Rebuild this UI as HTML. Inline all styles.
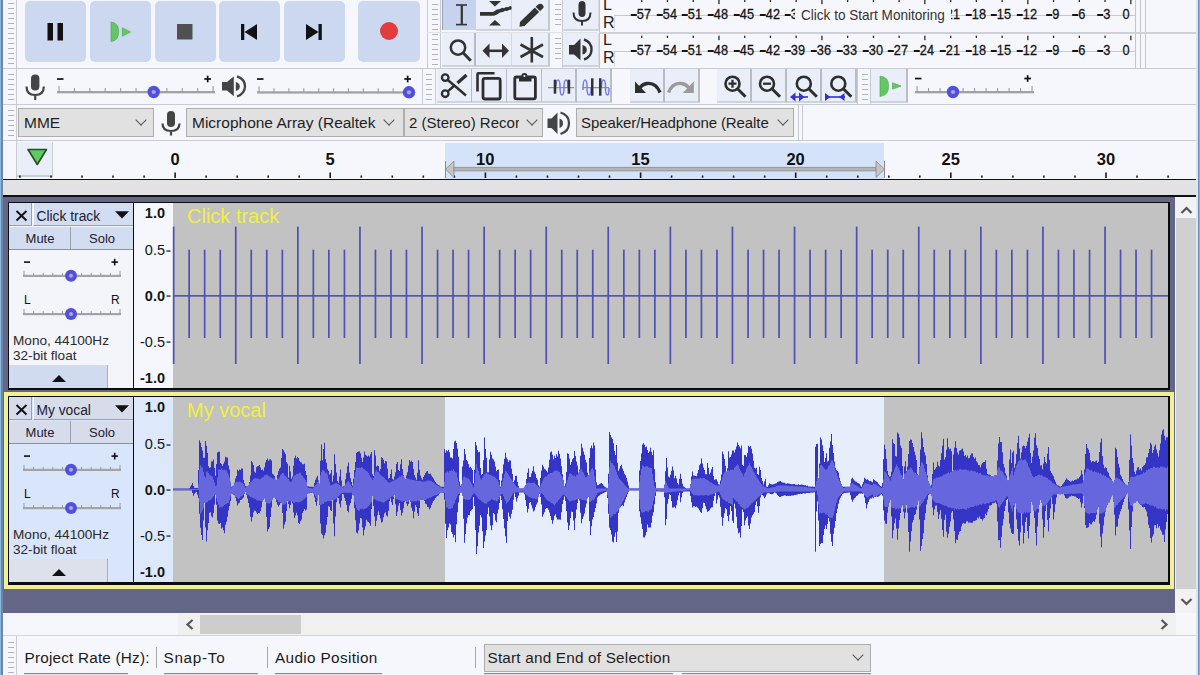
<!DOCTYPE html>
<html><head><meta charset="utf-8">
<style>
*{margin:0;padding:0;box-sizing:border-box}
html,body{width:1200px;height:675px;overflow:hidden;background:#f6f7fc;font-family:"Liberation Sans",sans-serif;color:#222}
.a{position:absolute}
.grip{position:absolute;width:6px;background:repeating-linear-gradient(to bottom,#b4b4b4 0,#b4b4b4 1px,transparent 1px,transparent 5px)}
.vl{position:absolute;width:1px;background:#c9cbd3}
.hl{position:absolute;height:1px;background:#c9cbd3}
.tb{position:absolute;background:#ccd8f0;border-radius:5px}
.tool{position:absolute;background:#e9eef9;border-bottom:2px solid #cfd3dc;border-right:1px solid #d6d9e0}
.dd{position:absolute;background:#e1e1e1;border:1px solid #adadad;font-size:15.5px;color:#1e1e1e;line-height:27px;padding-left:4px;white-space:nowrap;overflow:hidden}
.chev{position:absolute;top:10px;width:8px;height:8px;border-right:1.3px solid #555;border-bottom:1.3px solid #555;transform:rotate(45deg)}
svg{position:absolute;overflow:visible}
.ml{position:absolute;width:40px;text-align:center;font-size:15px;line-height:14px;color:#141414;transform:scaleX(0.85);white-space:nowrap;-webkit-text-stroke:0.3px #141414}
.mn{display:inline-block;width:6.8px;height:1.9px;background:#141414;vertical-align:3.2px}

</style></head><body>
<!-- window borders -->
<div class="a" style="left:0;top:0;width:2px;height:675px;background:#8cb6de"></div>
<div class="a" style="left:1px;top:0;width:2px;height:675px;background:#6a86a8"></div>


<!-- ROW 1 -->
<div class="grip" style="left:8px;top:3px;height:62px"></div>
<div class="vl" style="left:16px;top:0;height:68px"></div>
<div class="tb" style="left:25px;top:1px;width:61px;height:61px"></div>
<div class="tb" style="left:90px;top:1px;width:61px;height:61px"></div>
<div class="tb" style="left:155px;top:1px;width:61px;height:61px"></div>
<div class="tb" style="left:219px;top:1px;width:61px;height:61px"></div>
<div class="tb" style="left:284px;top:1px;width:61px;height:61px"></div>
<div class="tb" style="left:358px;top:1px;width:62px;height:61px"></div>
<div class="hl" style="left:3px;top:68px;width:1194px"></div>
<svg style="left:0;top:0" width="1200" height="70">
<rect x="47.5" y="23" width="5.5" height="17.5" fill="#111"/>
<rect x="57.5" y="23" width="5.5" height="17.5" fill="#111"/>
<path d="M111 22 Q119 23 118.5 31.5 Q119 40.5 111 41.5 Z" fill="#62c862" stroke="#4fa04f" stroke-width="0.6"/>
<path d="M122.3 27.7 L130.5 32 L122.3 36.3 Z" fill="#62c862" stroke="#4fa04f" stroke-width="0.6"/>
<rect x="177" y="24" width="15.5" height="15.5" fill="#505050"/>
<rect x="241" y="24" width="3.3" height="16" fill="#111"/>
<path d="M257 24 L244.5 32 L257 40 Z" fill="#111"/>
<rect x="318.5" y="24" width="3.3" height="16" fill="#111"/>
<path d="M306 24 L318.5 32 L306 40 Z" fill="#111"/>
<circle cx="389" cy="31" r="9" fill="#e23c3c"/>
</svg>


<!-- tools toolbar -->
<div class="vl" style="left:427px;top:0;height:68px"></div>
<div class="grip" style="left:432px;top:4px;height:62px"></div>
<div class="vl" style="left:440px;top:0;height:68px"></div>
<div class="a" style="left:442px;top:0;width:34px;height:30px;background:#c7d3ee;border-left:1px solid #9aa4b8"></div>
<div class="tool" style="left:476px;top:0;width:36px;height:31px"></div>
<div class="tool" style="left:512px;top:0;width:38px;height:31px;border-right:2px solid #c4c8d0"></div>
<div class="tool" style="left:442px;top:33px;width:34px;height:34px;border-right:2px solid #b8bcc6"></div>
<div class="tool" style="left:476px;top:33px;width:36px;height:34px"></div>
<div class="tool" style="left:512px;top:33px;width:38px;height:34px;border-right:2px solid #c4c8d0"></div>
<div class="grip" style="left:555px;top:4px;height:25px"></div>
<div class="grip" style="left:555px;top:38px;height:25px"></div>
<div class="vl" style="left:562px;top:0;height:68px"></div>
<div class="tool" style="left:563px;top:0;width:36px;height:31px"></div>
<div class="tool" style="left:563px;top:33px;width:36px;height:34px"></div>
<div class="hl" style="left:427px;top:32px;width:170px;background:#e0e2e8"></div>
<svg style="left:0;top:0" width="1200" height="70">
<g fill="#333" stroke="none">
<rect x="456" y="4.2" width="11" height="1.6"/>
<rect x="460.7" y="5" width="2.2" height="19.5"/>
<rect x="456" y="23.8" width="11" height="1.6"/>
<path d="M489 1 L501 1 L495 6.5 Z"/>
<path d="M489 25.5 L501 25.5 L495 20 Z"/>
<path d="M480 12 L493 12 L497 9.5 L500 9 L502 7.8 L504 8.2 L506 7 L508 7.2 L510 6 L511.5 6.5 L511.5 9.5 L509 10 L507 11 L505 10.8 L503 12 L500 12.5 L497 14.5 L494 15.8 L480 15.8 Z"/>
<path d="M520 22 L538 4.5 Q540.5 2.8 542.5 4.5 Q544.5 6.5 542.8 8.5 L524.5 26 L519.5 26.8 Z"/><path d="M535.2 7.2 L540.2 12.2" stroke="#e9eef9" stroke-width="1.2"/>
<path d="M578.5 5 Q578.5 1 582 1 Q585.5 1 585.5 5 L585.5 13 Q585.5 17 582 17 Q578.5 17 578.5 13 Z"/>
</g>
<g fill="none" stroke="#333" stroke-width="2">
<path d="M573.5 12.5 Q573.5 21 582 21 Q590.5 21 590.5 12.5"/>
<path d="M582 21 L582 25.5"/>
<circle cx="458" cy="47.6" r="7.2" stroke-width="2.5"/>
<path d="M463.3 53 L470.8 60.8" stroke-width="3"/>
<path d="M487 50.8 L505 50.8" stroke-width="2.6"/>
<path d="M531.8 37 L531.8 62.5 M520.5 44.5 L543 57 M520.5 57 L543 44.5" stroke-width="2.6"/>
<path d="M584 39.5 Q591.5 42 591.5 49.5 Q591.5 57 584 59.5" stroke-width="2.4"/>
</g>
<g fill="#333">
<path d="M482.5 50.8 L489.5 43.6 L489.5 58 Z"/>
<path d="M509 50.8 L502 43.6 L502 58 Z"/>
<path d="M569 45 L574 45 L580.5 38.5 L580.5 60.3 L574 54.5 L569 54.5 Z"/><path d="M582.5 45 Q586.8 46 586.8 49.7 Q586.8 53.5 582.5 54.5 Z"/>
</g>
<path d="M583 43.5 L583 55" stroke="#333" stroke-width="0"/>
</svg>
<!-- meters -->
<div class="vl" style="left:599px;top:0;height:68px;background:#c4c6cc"></div>
<div class="a" style="left:603px;top:-1.8px;font-size:16px;line-height:14px;color:#222">L</div>
<div class="a" style="left:603px;top:16.2px;font-size:16px;line-height:14px;color:#222">R</div>
<div class="vl" style="left:614px;top:15px;height:16px;background:#d4d6dc"></div>
<div class="hl" style="left:614px;top:15px;width:521px;background:#c8cad0"></div>
<div class="a" style="left:603px;top:33px;font-size:16px;line-height:14px;color:#222">L</div>
<div class="a" style="left:603px;top:51.2px;font-size:16px;line-height:14px;color:#222">R</div>
<div class="vl" style="left:614px;top:51px;height:16px;background:#d4d6dc"></div>
<div class="hl" style="left:614px;top:51px;width:521px;background:#c8cad0"></div>
<svg style="left:0;top:0" width="1200" height="70"><g fill="#2a2a2a"><rect x="641.1" y="-0.3" width="1.3" height="2.3"/><rect x="666.8" y="-0.3" width="1.3" height="2.3"/><rect x="692.6" y="-0.3" width="1.3" height="2.3"/><rect x="718.3" y="-0.3" width="1.3" height="4.5"/><rect x="744.1" y="-0.3" width="1.3" height="2.3"/><rect x="769.8" y="-0.3" width="1.3" height="2.3"/><rect x="795.5" y="-0.3" width="1.3" height="2.3"/><rect x="821.3" y="-0.3" width="1.3" height="4.5"/><rect x="847.0" y="-0.3" width="1.3" height="2.3"/><rect x="872.8" y="-0.3" width="1.3" height="2.3"/><rect x="898.5" y="-0.3" width="1.3" height="2.3"/><rect x="924.2" y="-0.3" width="1.3" height="4.5"/><rect x="950.0" y="-0.3" width="1.3" height="2.3"/><rect x="975.7" y="-0.3" width="1.3" height="2.3"/><rect x="1001.5" y="-0.3" width="1.3" height="2.3"/><rect x="1027.2" y="-0.3" width="1.3" height="4.5"/><rect x="1052.9" y="-0.3" width="1.3" height="2.3"/><rect x="1078.7" y="-0.3" width="1.3" height="2.3"/><rect x="1104.4" y="-0.3" width="1.3" height="2.3"/><rect x="1130.2" y="-0.3" width="1.3" height="4.5"/><rect x="641.1" y="35.7" width="1.3" height="2.3"/><rect x="666.8" y="35.7" width="1.3" height="2.3"/><rect x="692.6" y="35.7" width="1.3" height="2.3"/><rect x="718.3" y="35.7" width="1.3" height="4.5"/><rect x="744.1" y="35.7" width="1.3" height="2.3"/><rect x="769.8" y="35.7" width="1.3" height="2.3"/><rect x="795.5" y="35.7" width="1.3" height="2.3"/><rect x="821.3" y="35.7" width="1.3" height="4.5"/><rect x="847.0" y="35.7" width="1.3" height="2.3"/><rect x="872.8" y="35.7" width="1.3" height="2.3"/><rect x="898.5" y="35.7" width="1.3" height="2.3"/><rect x="924.2" y="35.7" width="1.3" height="4.5"/><rect x="950.0" y="35.7" width="1.3" height="2.3"/><rect x="975.7" y="35.7" width="1.3" height="2.3"/><rect x="1001.5" y="35.7" width="1.3" height="2.3"/><rect x="1027.2" y="35.7" width="1.3" height="4.5"/><rect x="1052.9" y="35.7" width="1.3" height="2.3"/><rect x="1078.7" y="35.7" width="1.3" height="2.3"/><rect x="1104.4" y="35.7" width="1.3" height="2.3"/><rect x="1130.2" y="35.7" width="1.3" height="4.5"/></g></svg>
<div class="ml" style="left:620.9px;top:7px"><i class="mn"></i>57</div>
<div class="ml" style="left:646.6px;top:7px"><i class="mn"></i>54</div>
<div class="ml" style="left:672.4px;top:7px"><i class="mn"></i>51</div>
<div class="ml" style="left:698.1px;top:7px"><i class="mn"></i>48</div>
<div class="ml" style="left:723.9px;top:7px"><i class="mn"></i>45</div>
<div class="ml" style="left:749.6px;top:7px"><i class="mn"></i>42</div>
<div class="ml" style="left:775.3px;top:7px"><i class="mn"></i>39</div>
<div class="ml" style="left:801.1px;top:7px"><i class="mn"></i>36</div>
<div class="ml" style="left:826.8px;top:7px"><i class="mn"></i>33</div>
<div class="ml" style="left:852.6px;top:7px"><i class="mn"></i>30</div>
<div class="ml" style="left:878.3px;top:7px"><i class="mn"></i>27</div>
<div class="ml" style="left:904.0px;top:7px"><i class="mn"></i>24</div>
<div class="ml" style="left:929.8px;top:7px"><i class="mn"></i>21</div>
<div class="ml" style="left:955.5px;top:7px"><i class="mn"></i>18</div>
<div class="ml" style="left:981.3px;top:7px"><i class="mn"></i>15</div>
<div class="ml" style="left:1007.0px;top:7px"><i class="mn"></i>12</div>
<div class="ml" style="left:1032.7px;top:7px"><i class="mn"></i>9</div>
<div class="ml" style="left:1058.5px;top:7px"><i class="mn"></i>6</div>
<div class="ml" style="left:1084.2px;top:7px"><i class="mn"></i>3</div>
<div class="ml" style="left:1106.2px;top:7px">0</div>
<div class="ml" style="left:620.9px;top:43px"><i class="mn"></i>57</div>
<div class="ml" style="left:646.6px;top:43px"><i class="mn"></i>54</div>
<div class="ml" style="left:672.4px;top:43px"><i class="mn"></i>51</div>
<div class="ml" style="left:698.1px;top:43px"><i class="mn"></i>48</div>
<div class="ml" style="left:723.9px;top:43px"><i class="mn"></i>45</div>
<div class="ml" style="left:749.6px;top:43px"><i class="mn"></i>42</div>
<div class="ml" style="left:775.3px;top:43px"><i class="mn"></i>39</div>
<div class="ml" style="left:801.1px;top:43px"><i class="mn"></i>36</div>
<div class="ml" style="left:826.8px;top:43px"><i class="mn"></i>33</div>
<div class="ml" style="left:852.6px;top:43px"><i class="mn"></i>30</div>
<div class="ml" style="left:878.3px;top:43px"><i class="mn"></i>27</div>
<div class="ml" style="left:904.0px;top:43px"><i class="mn"></i>24</div>
<div class="ml" style="left:929.8px;top:43px"><i class="mn"></i>21</div>
<div class="ml" style="left:955.5px;top:43px"><i class="mn"></i>18</div>
<div class="ml" style="left:981.3px;top:43px"><i class="mn"></i>15</div>
<div class="ml" style="left:1007.0px;top:43px"><i class="mn"></i>12</div>
<div class="ml" style="left:1032.7px;top:43px"><i class="mn"></i>9</div>
<div class="ml" style="left:1058.5px;top:43px"><i class="mn"></i>6</div>
<div class="ml" style="left:1084.2px;top:43px"><i class="mn"></i>3</div>
<div class="ml" style="left:1106.2px;top:43px">0</div>

<div class="a" style="left:795px;top:5px;width:156px;height:20px;background:#f6f7fc"></div>
<div class="a" style="left:801px;top:7px;font-size:14.5px;line-height:16px;color:#333;transform:scaleX(0.935);transform-origin:0 0;white-space:nowrap">Click to Start Monitoring</div>
<div class="vl" style="left:1135px;top:0;height:68px;background:#c4c6cc"></div>
<div class="vl" style="left:1140px;top:0;height:68px;background:#c4c6cc"></div>
<div class="vl" style="left:1145px;top:0;height:68px;background:#c4c6cc"></div>
<div class="hl" style="left:599px;top:32px;width:598px;height:2px;background:#cfd1d6"></div>

<!-- ROW 2 -->
<div class="grip" style="left:8px;top:74px;height:27px"></div>
<div class="vl" style="left:16px;top:68px;height:36px"></div>
<div class="vl" style="left:422px;top:68px;height:36px"></div>
<div class="grip" style="left:426px;top:74px;height:27px"></div>
<div class="vl" style="left:435px;top:68px;height:36px"></div>
<div class="hl" style="left:3px;top:104px;width:1194px"></div>
<svg style="left:0;top:0" width="1200" height="140"><rect x="57" y="91" width="158" height="2.3" fill="#a2a2a2"/><rect x="58.5" y="86.0" width="1.1" height="6" fill="#9c9c9c"/><rect x="73.9" y="88.0" width="1.1" height="4" fill="#9c9c9c"/><rect x="89.3" y="88.0" width="1.1" height="4" fill="#9c9c9c"/><rect x="104.7" y="88.0" width="1.1" height="4" fill="#9c9c9c"/><rect x="120.1" y="88.0" width="1.1" height="4" fill="#9c9c9c"/><rect x="135.5" y="88.0" width="1.1" height="4" fill="#9c9c9c"/><rect x="150.9" y="88.0" width="1.1" height="4" fill="#9c9c9c"/><rect x="166.3" y="88.0" width="1.1" height="4" fill="#9c9c9c"/><rect x="181.7" y="88.0" width="1.1" height="4" fill="#9c9c9c"/><rect x="197.1" y="88.0" width="1.1" height="4" fill="#9c9c9c"/><rect x="212.5" y="86.0" width="1.1" height="6" fill="#9c9c9c"/><circle cx="153.7" cy="92" r="6.2" fill="#5050dc"/><circle cx="153.7" cy="92" r="2.1" fill="#a4a8d0"/><rect x="57" y="78.2" width="6.5" height="1.7" fill="#111"/><rect x="204.3" y="78.15" width="6.7" height="1.7" fill="#111"/><rect x="206.8" y="75.7" width="1.7" height="6.6" fill="#111"/><rect x="257" y="91.3" width="153" height="2.3" fill="#a2a2a2"/><rect x="258.5" y="86.3" width="1.1" height="6" fill="#9c9c9c"/><rect x="273.4" y="88.3" width="1.1" height="4" fill="#9c9c9c"/><rect x="288.3" y="88.3" width="1.1" height="4" fill="#9c9c9c"/><rect x="303.2" y="88.3" width="1.1" height="4" fill="#9c9c9c"/><rect x="318.1" y="88.3" width="1.1" height="4" fill="#9c9c9c"/><rect x="333.0" y="88.3" width="1.1" height="4" fill="#9c9c9c"/><rect x="347.9" y="88.3" width="1.1" height="4" fill="#9c9c9c"/><rect x="362.8" y="88.3" width="1.1" height="4" fill="#9c9c9c"/><rect x="377.7" y="88.3" width="1.1" height="4" fill="#9c9c9c"/><rect x="392.6" y="88.3" width="1.1" height="4" fill="#9c9c9c"/><rect x="407.5" y="86.3" width="1.1" height="6" fill="#9c9c9c"/><circle cx="409" cy="92.3" r="6.2" fill="#5050dc"/><circle cx="409" cy="92.3" r="2.1" fill="#a4a8d0"/><rect x="257" y="78.2" width="6.5" height="1.7" fill="#111"/><rect x="404.3" y="78.15" width="6.7" height="1.7" fill="#111"/><rect x="406.8" y="75.7" width="1.7" height="6.6" fill="#111"/><rect x="915" y="91" width="119" height="2.3" fill="#a2a2a2"/><rect x="916.5" y="86.0" width="1.1" height="6" fill="#9c9c9c"/><rect x="928.0" y="88.0" width="1.1" height="4" fill="#9c9c9c"/><rect x="939.5" y="88.0" width="1.1" height="4" fill="#9c9c9c"/><rect x="951.0" y="88.0" width="1.1" height="4" fill="#9c9c9c"/><rect x="962.5" y="88.0" width="1.1" height="4" fill="#9c9c9c"/><rect x="974.0" y="88.0" width="1.1" height="4" fill="#9c9c9c"/><rect x="985.5" y="88.0" width="1.1" height="4" fill="#9c9c9c"/><rect x="997.0" y="88.0" width="1.1" height="4" fill="#9c9c9c"/><rect x="1008.5" y="88.0" width="1.1" height="4" fill="#9c9c9c"/><rect x="1020.0" y="88.0" width="1.1" height="4" fill="#9c9c9c"/><rect x="1031.5" y="86.0" width="1.1" height="6" fill="#9c9c9c"/><circle cx="953" cy="92" r="6.2" fill="#5050dc"/><circle cx="953" cy="92" r="2.1" fill="#a4a8d0"/><rect x="915" y="77.7" width="6.5" height="1.7" fill="#111"/><rect x="1024.3" y="77.65" width="6.7" height="1.7" fill="#111"/><rect x="1026.8" y="75.2" width="1.7" height="6.6" fill="#111"/><g fill="#444"><path d="M31 78.5 Q31 74.4 35.2 74.4 Q39.4 74.4 39.4 78.5 L39.4 86.5 Q39.4 90.6 35.2 90.6 Q31 90.6 31 86.5 Z"/></g><g fill="none" stroke="#444" stroke-width="2.2"><path d="M26.5 86.5 Q26.5 95 35.2 95 Q43.8 95 43.8 86.5"/><path d="M35.2 95 L35.2 100"/></g><g fill="#444"><path d="M222 82 L227 82 L233.8 76.5 L233.8 96.2 L227 90.5 L222 90.5 Z"/><path d="M235.8 82 Q239.8 83 239.8 86.5 Q239.8 90 235.8 91 Z"/></g><path d="M237 76.3 Q245 79 245 86.3 Q245 93.6 237 96.5" fill="none" stroke="#444" stroke-width="2.3"/></svg>

<!-- edit toolbar -->
<div class="tool" style="left:437px;top:69px;width:35px;height:34px;border-right:1px solid #b8bcc6"></div>
<div class="tool" style="left:472px;top:69px;width:35px;height:34px;border-right:1px solid #b8bcc6"></div>
<div class="tool" style="left:507px;top:69px;width:35px;height:34px;border-right:1px solid #b8bcc6"></div>
<div class="tool" style="left:542px;top:69px;width:35px;height:34px;border-right:2px solid #b8bcc6"></div>
<div class="tool" style="left:577px;top:69px;width:35px;height:34px;border-right:2px solid #b8bcc6"></div>
<div class="tool" style="left:630px;top:69px;width:35px;height:34px;border-right:2px solid #b8bcc6"></div>
<div class="tool" style="left:665px;top:69px;width:35px;height:34px;border-right:2px solid #b8bcc6"></div>
<div class="tool" style="left:717px;top:69px;width:35px;height:34px;border-right:2px solid #b8bcc6"></div>
<div class="tool" style="left:752px;top:69px;width:35px;height:34px;border-right:2px solid #b8bcc6"></div>
<div class="tool" style="left:787px;top:69px;width:35px;height:34px;border-right:2px solid #b8bcc6"></div>
<div class="tool" style="left:822px;top:69px;width:35px;height:34px;border-right:2px solid #b8bcc6"></div>
<div class="vl" style="left:857px;top:68px;height:36px"></div>
<div class="grip" style="left:862px;top:74px;height:27px"></div>
<div class="vl" style="left:870px;top:68px;height:36px"></div>
<div class="tool" style="left:871px;top:69px;width:37px;height:34px;border-right:2px solid #b8bcc6"></div>
<svg style="left:0;top:0" width="1200" height="140">
<g fill="none" stroke="#2e2e2e">
<circle cx="445.2" cy="77.6" r="3.3" stroke-width="2.3"/>
<circle cx="445.2" cy="93.7" r="3.3" stroke-width="2.3"/>
<path d="M447.8 80 L466 95.5" stroke-width="2.4"/>
<path d="M447.8 91.3 L455 85" stroke-width="2.4"/>
<path d="M457.5 83 L466.5 75" stroke-width="3.2"/>
<path d="M477.5 91.5 L477.5 74.2 Q477.5 73.2 478.5 73.2 L494.5 73.2" stroke-width="2.6"/>
<rect x="483" y="78.4" width="17.2" height="20.6" rx="2" stroke-width="2.8"/>
<rect x="514.8" y="77" width="20.6" height="21.8" rx="1.8" stroke-width="2.8"/>
</g>
<g fill="#2e2e2e">
<path d="M519 76.5 L531.5 76.5 L531.5 81.5 L519 81.5 Z"/>
<circle cx="524.4" cy="76" r="3"/>
</g>
<circle cx="524.4" cy="76" r="1.1" fill="#e9eef9"/>
<path d="M548 87.7 L574 87.7 M583 87.7 L609 87.7" stroke="#8890b0" stroke-width="1.2"/>
<path d="M556 86 Q556 80 558 80 Q560 80 560 87 Q560 95 562 95 Q564 95 564 87 Q564 80 566 80 Q568 80 568 87" fill="none" stroke="#7a7ae6" stroke-width="1.5"/>
<path d="M583 90 Q583 80 585 80 Q587 80 587 87 Q587 95 589 95 Q591 95 591 87 M601.5 87 Q601.5 80 603.5 80 Q605.5 80 605.5 87 Q605.5 95 607.5 95 Q609 95 609 88" fill="none" stroke="#7a7ae6" stroke-width="1.5"/>
<g fill="#333">
<rect x="553.7" y="79.7" width="2.6" height="14"/>
<rect x="567.6" y="79.7" width="2.6" height="14"/>
<rect x="591" y="78.3" width="2.5" height="17.4"/>
<rect x="599" y="78.3" width="2.5" height="17.4"/>
</g>
<path d="M660 92.5 Q656 82.5 647 83.5 Q642.5 84 639.5 88" fill="none" stroke="#2e2e2e" stroke-width="3.4"/>
<path d="M635 81.5 L635 93 L646 93 Z" fill="#2e2e2e"/>
<path d="M668.5 92.5 Q672.5 82.5 681.5 83.5 Q686 84 689 88" fill="none" stroke="#9a9a9a" stroke-width="3.4"/>
<path d="M693.8 81.5 L693.8 93 L682.8 93 Z" fill="#9a9a9a"/>
<g fill="none" stroke="#2e2e2e" stroke-width="2.6">
<circle cx="732.5" cy="83.7" r="7"/><path d="M737.5 88.8 L745.5 96.8" stroke-width="3"/>
<path d="M728.5 83.7 L736.5 83.7 M732.5 79.7 L732.5 87.7" stroke-width="2.3"/>
<circle cx="767" cy="83.7" r="7"/><path d="M772 88.8 L780 96.8" stroke-width="3"/>
<path d="M763 83.7 L771 83.7" stroke-width="2.3"/>
<circle cx="803.8" cy="83.7" r="7"/><path d="M808.8 88.8 L816.8 96.8" stroke-width="3"/>
<circle cx="838.3" cy="83.7" r="7"/><path d="M843.3 88.8 L851.3 96.8" stroke-width="3"/>
</g>
<g fill="#3434cc">
<path d="M790 97 L795.5 92.5 L795.5 101.5 Z"/><path d="M804.5 97 L799 92.5 L799 101.5 Z"/>
<rect x="793" y="96.2" width="15" height="1.6"/>
<path d="M825 93 L825 101 L830.5 97 Z"/><path d="M844.5 93 L844.5 101 L839 97 Z"/>
<rect x="825" y="96.2" width="20" height="1.6"/>
</g>
<path d="M880 76 Q889 77 888.5 86 Q889 95.5 880 96.5 Z" fill="#62c862" stroke="#4fa04f" stroke-width="0.6"/>
<path d="M892.5 82.7 L901 86 L892.5 89.3 Z" fill="#62c862" stroke="#4fa04f" stroke-width="0.6"/>
</svg>


<!-- ROW 3 devices -->
<div class="grip" style="left:8px;top:110px;height:27px"></div>
<div class="vl" style="left:16px;top:104px;height:36px"></div>
<div class="dd" style="left:18px;top:108px;width:136px;height:29px;padding-left:5px">MME<div class="chev" style="left:118px;top:7px"></div></div>
<div class="dd" style="left:186px;top:108px;width:218px;height:29px;padding-left:5px">Microphone Array (Realtek<div class="chev" style="left:198px;top:7px"></div></div>
<div class="dd" style="left:404px;top:108px;width:139px;height:29px;padding-left:4px"><span style="display:inline-block;width:110px;overflow:hidden;vertical-align:top;font-size:15px">2 (Stereo) Recor</span><div class="chev" style="left:123px;top:7px"></div></div>
<div class="dd" style="left:576px;top:108px;width:218px;height:29px;padding-left:4px"><span style="display:inline-block;width:188px;overflow:hidden;vertical-align:top;font-size:15px;letter-spacing:-0.1px">Speaker/Headphone (Realte</span><div class="chev" style="left:202px;top:7px"></div></div>
<div class="vl" style="left:798px;top:104px;height:36px"></div>
<div class="vl" style="left:802px;top:104px;height:36px"></div>
<div class="hl" style="left:3px;top:140px;width:1194px"></div>
<svg style="left:0;top:0" width="1200" height="140">
<path d="M167 115 Q167 111 171 111 Q175 111 175 115 L175 123 Q175 127 171 127 Q167 127 167 123 Z" fill="#444"/>
<path d="M162.5 123.5 Q162.5 131 171 131 Q179.5 131 179.5 123.5 M171 131 L171 135.6" fill="none" stroke="#444" stroke-width="2.2"/>
<path d="M547.5 118.5 L551.5 118.5 L557.5 112.5 L557.5 134 L551.5 128 L547.5 128 Z" fill="#444"/>
<path d="M559.5 118.5 Q563 119.5 563 123.3 Q563 127 559.5 128 Z" fill="#444"/>
<path d="M560.5 112.5 Q569 115 569 123.3 Q569 131.5 560.5 134" fill="none" stroke="#444" stroke-width="2.3"/>
</svg>

<!-- RULER -->
<div class="vl" style="left:16px;top:140px;height:39px"></div>
<div class="tool" style="left:17px;top:142px;width:36px;height:35px;border-bottom:2px solid #c8ccd4;border-right:1px solid #c8ccd4"></div>
<div class="a" style="left:445px;top:143px;width:439px;height:36px;background:#d5e3fa"></div>
<div class="a" style="left:3px;top:179px;width:1194px;height:1.5px;background:#111"></div>
<div class="a" style="left:3px;top:180px;width:1194px;height:15px;background:#e2e2e4"></div>
<div class="a" style="left:3px;top:195px;width:1194px;height:2px;background:#111"></div>
<svg style="left:0;top:0" width="1200" height="200"><path d="M28 149.5 L46.5 149.5 L37.3 164.5 Z" fill="#5ccc5c" stroke="#2e4a2e" stroke-width="1.6" stroke-linejoin="round"/><rect x="19.1" y="175.5" width="1.6" height="2.2" fill="#1a1a1a"/><rect x="50.2" y="175.5" width="1.6" height="2.2" fill="#1a1a1a"/><rect x="81.2" y="175.5" width="1.6" height="2.2" fill="#1a1a1a"/><rect x="112.2" y="175.5" width="1.6" height="2.2" fill="#1a1a1a"/><rect x="143.3" y="175.5" width="1.6" height="2.2" fill="#1a1a1a"/><rect x="174.3" y="172.5" width="1.6" height="5.5" fill="#1a1a1a"/><rect x="205.3" y="175.5" width="1.6" height="2.2" fill="#1a1a1a"/><rect x="236.4" y="175.5" width="1.6" height="2.2" fill="#1a1a1a"/><rect x="267.4" y="175.5" width="1.6" height="2.2" fill="#1a1a1a"/><rect x="298.4" y="175.5" width="1.6" height="2.2" fill="#1a1a1a"/><rect x="329.4" y="172.5" width="1.6" height="5.5" fill="#1a1a1a"/><rect x="360.5" y="175.5" width="1.6" height="2.2" fill="#1a1a1a"/><rect x="391.5" y="175.5" width="1.6" height="2.2" fill="#1a1a1a"/><rect x="422.5" y="175.5" width="1.6" height="2.2" fill="#1a1a1a"/><rect x="453.6" y="175.5" width="1.6" height="2.2" fill="#1a1a1a"/><rect x="484.6" y="172.5" width="1.6" height="5.5" fill="#1a1a1a"/><rect x="515.6" y="175.5" width="1.6" height="2.2" fill="#1a1a1a"/><rect x="546.7" y="175.5" width="1.6" height="2.2" fill="#1a1a1a"/><rect x="577.7" y="175.5" width="1.6" height="2.2" fill="#1a1a1a"/><rect x="608.7" y="175.5" width="1.6" height="2.2" fill="#1a1a1a"/><rect x="639.8" y="172.5" width="1.6" height="5.5" fill="#1a1a1a"/><rect x="670.8" y="175.5" width="1.6" height="2.2" fill="#1a1a1a"/><rect x="701.8" y="175.5" width="1.6" height="2.2" fill="#1a1a1a"/><rect x="732.8" y="175.5" width="1.6" height="2.2" fill="#1a1a1a"/><rect x="763.9" y="175.5" width="1.6" height="2.2" fill="#1a1a1a"/><rect x="794.9" y="172.5" width="1.6" height="5.5" fill="#1a1a1a"/><rect x="825.9" y="175.5" width="1.6" height="2.2" fill="#1a1a1a"/><rect x="857.0" y="175.5" width="1.6" height="2.2" fill="#1a1a1a"/><rect x="888.0" y="175.5" width="1.6" height="2.2" fill="#1a1a1a"/><rect x="919.0" y="175.5" width="1.6" height="2.2" fill="#1a1a1a"/><rect x="950.0" y="172.5" width="1.6" height="5.5" fill="#1a1a1a"/><rect x="981.1" y="175.5" width="1.6" height="2.2" fill="#1a1a1a"/><rect x="1012.1" y="175.5" width="1.6" height="2.2" fill="#1a1a1a"/><rect x="1043.1" y="175.5" width="1.6" height="2.2" fill="#1a1a1a"/><rect x="1074.2" y="175.5" width="1.6" height="2.2" fill="#1a1a1a"/><rect x="1105.2" y="172.5" width="1.6" height="5.5" fill="#1a1a1a"/><rect x="1136.2" y="175.5" width="1.6" height="2.2" fill="#1a1a1a"/><rect x="1167.3" y="175.5" width="1.6" height="2.2" fill="#1a1a1a"/><path d="M454 161 L454 177.5 L445.5 169.2 Z" fill="#c4c4c4" stroke="#8a8a8a" stroke-width="0.8"/><rect x="445" y="161" width="1" height="17" fill="#8a8a8a"/><rect x="454" y="167.3" width="422" height="3.6" fill="#b4b4b4" stroke="#8a8a8a" stroke-width="0.8"/><path d="M876 161 L876 177.5 L884.5 169.2 Z" fill="#c4c4c4" stroke="#8a8a8a" stroke-width="0.8"/><rect x="884" y="161" width="1" height="17" fill="#8a8a8a"/></svg>
<div class="a" style="left:150.0px;width:50px;text-align:center;top:151px;font-size:16.5px;line-height:17px;font-weight:bold;color:#111">0</div>
<div class="a" style="left:305.1px;width:50px;text-align:center;top:151px;font-size:16.5px;line-height:17px;font-weight:bold;color:#111">5</div>
<div class="a" style="left:460.3px;width:50px;text-align:center;top:151px;font-size:16.5px;line-height:17px;font-weight:bold;color:#111">10</div>
<div class="a" style="left:615.5px;width:50px;text-align:center;top:151px;font-size:16.5px;line-height:17px;font-weight:bold;color:#111">15</div>
<div class="a" style="left:770.6px;width:50px;text-align:center;top:151px;font-size:16.5px;line-height:17px;font-weight:bold;color:#111">20</div>
<div class="a" style="left:925.8px;width:50px;text-align:center;top:151px;font-size:16.5px;line-height:17px;font-weight:bold;color:#111">25</div>
<div class="a" style="left:1080.9px;width:50px;text-align:center;top:151px;font-size:16.5px;line-height:17px;font-weight:bold;color:#111">30</div>
<div class="hl" style="left:3px;top:140px;width:1194px"></div>
<!-- TRACKS -->
<div class="a" style="left:3px;top:197px;width:1173px;height:416px;background:#646687"></div>
<div class="a" style="left:8px;top:202px;width:1162px;height:188px;background:#0c0c0c"></div>
<div class="a" style="left:9px;top:203px;width:124px;height:185px;background:#f3f5fb"></div>
<div class="a" style="left:134px;top:203px;width:39px;height:185px;background:#f6f7fd"></div>
<div class="a" style="left:173px;top:203px;width:995px;height:185px;background:#c2c2c2"></div>
<div class="a" style="left:9px;top:203px;width:23px;height:23px;background:#d2ddf1;border-right:1px solid #9aa0ac;border-bottom:1px solid #9aa0ac"></div>
<div class="a" style="left:33px;top:203px;width:100px;height:23px;background:#d2ddf1;border-bottom:1px solid #9aa0ac;border-left:1px solid #fafcff"></div>
<div class="a" style="left:36.5px;top:208.5px;font-size:13.8px;line-height:16px;color:#202030">Click track</div>
<div class="a" style="left:9px;top:227px;width:62px;height:23px;background:#d2ddf1;border-right:1px solid #9aa0ac;border-bottom:1px solid #8a909c"></div>
<div class="a" style="left:71px;top:227px;width:62px;height:23px;background:#d2ddf1;border-bottom:1px solid #8a909c"></div>
<div class="a" style="left:9px;top:231px;width:62px;text-align:center;font-size:13px;line-height:16px;color:#202030">Mute</div>
<div class="a" style="left:71px;top:231px;width:62px;text-align:center;font-size:13px;line-height:16px;color:#202030">Solo</div>
<div class="a" style="left:13px;top:333px;font-size:13.6px;line-height:15px;color:#2a2a2a">Mono, 44100Hz<br>32-bit float</div>
<div class="a" style="left:9px;top:365px;width:99px;height:23px;background:#d0dbef;border-right:1px solid #a8aebb"></div>
<svg style="left:0;top:202px" width="180" height="190"><path d="M16.5 9 L26.5 18.5 M26.5 9 L16.5 18.5" stroke="#111" stroke-width="1.9"/><path d="M115 9.3 L129 9.3 L122 16.5 Z" fill="#111"/><rect x="23" y="72.8" width="98" height="2.2" fill="#a4a4a4"/><rect x="23.5" y="68.8" width="1" height="5" fill="#9a9a9a"/><rect x="33.1" y="70.8" width="1" height="3" fill="#9a9a9a"/><rect x="42.7" y="70.8" width="1" height="3" fill="#9a9a9a"/><rect x="52.3" y="70.8" width="1" height="3" fill="#9a9a9a"/><rect x="61.9" y="70.8" width="1" height="3" fill="#9a9a9a"/><rect x="71.5" y="70.8" width="1" height="3" fill="#9a9a9a"/><rect x="81.1" y="70.8" width="1" height="3" fill="#9a9a9a"/><rect x="90.7" y="70.8" width="1" height="3" fill="#9a9a9a"/><rect x="100.3" y="70.8" width="1" height="3" fill="#9a9a9a"/><rect x="109.9" y="70.8" width="1" height="3" fill="#9a9a9a"/><rect x="119.5" y="68.8" width="1" height="5" fill="#9a9a9a"/><circle cx="71" cy="73.8" r="6" fill="#5050dc"/><circle cx="71" cy="73.8" r="2" fill="#a8acd4"/><rect x="23" y="111" width="98" height="2.2" fill="#a4a4a4"/><rect x="23.5" y="107.0" width="1" height="5" fill="#9a9a9a"/><rect x="33.1" y="109.0" width="1" height="3" fill="#9a9a9a"/><rect x="42.7" y="109.0" width="1" height="3" fill="#9a9a9a"/><rect x="52.3" y="109.0" width="1" height="3" fill="#9a9a9a"/><rect x="61.9" y="109.0" width="1" height="3" fill="#9a9a9a"/><rect x="71.5" y="109.0" width="1" height="3" fill="#9a9a9a"/><rect x="81.1" y="109.0" width="1" height="3" fill="#9a9a9a"/><rect x="90.7" y="109.0" width="1" height="3" fill="#9a9a9a"/><rect x="100.3" y="109.0" width="1" height="3" fill="#9a9a9a"/><rect x="109.9" y="109.0" width="1" height="3" fill="#9a9a9a"/><rect x="119.5" y="107.0" width="1" height="5" fill="#9a9a9a"/><circle cx="71" cy="112" r="6" fill="#5050dc"/><circle cx="71" cy="112" r="2" fill="#a8acd4"/><rect x="24" y="59.3" width="6" height="1.6" fill="#111"/><rect x="111.5" y="59.3" width="6.5" height="1.6" fill="#111"/><rect x="113.9" y="56.8" width="1.6" height="6.6" fill="#111"/><path d="M52 180 L66 180 L59 173 Z" fill="#111"/><rect x="166.5" y="48.4" width="4" height="1.3" fill="#222"/><rect x="166.5" y="93.4" width="4" height="1.3" fill="#222"/><rect x="166.5" y="139.4" width="4" height="1.3" fill="#222"/></svg>
<div class="a" style="left:24px;top:294px;font-size:12px;line-height:12px;color:#111">L</div>
<div class="a" style="left:111px;top:294px;font-size:12px;line-height:12px;color:#111">R</div>
<div class="a" style="left:129px;width:36px;text-align:right;top:205px;font-size:14.5px;line-height:16px;font-weight:bold;color:#141414">1.0</div>
<div class="a" style="left:129px;width:36px;text-align:right;top:241.5px;font-size:14.5px;line-height:16px;font-weight:normal;color:#141414">0.5</div>
<div class="a" style="left:129px;width:36px;text-align:right;top:287.5px;font-size:14.5px;line-height:16px;font-weight:bold;color:#141414">0.0</div>
<div class="a" style="left:129px;width:36px;text-align:right;top:333.5px;font-size:14.5px;line-height:16px;font-weight:normal;color:#141414">-0.5</div>
<div class="a" style="left:129px;width:36px;text-align:right;top:369.5px;font-size:14.5px;line-height:16px;font-weight:bold;color:#141414">-1.0</div>
<div class="a" style="left:187px;top:205px;font-size:20px;line-height:22px;color:#f0f040">Click track</div>
<div class="a" style="left:4px;top:392px;width:1170px;height:197px;border:4px solid #f1f092"></div>
<div class="a" style="left:8px;top:396px;width:1162px;height:189px;background:#0c0c0c"></div>
<div class="a" style="left:9px;top:397px;width:124px;height:185px;background:#d9e5fa"></div>
<div class="a" style="left:134px;top:397px;width:39px;height:185px;background:#dde8fb"></div>
<div class="a" style="left:173px;top:397px;width:995px;height:185px;background:#c2c2c2"></div>
<div class="a" style="left:9px;top:397px;width:23px;height:23px;background:#d6dcea;border-right:1px solid #9aa0ac;border-bottom:1px solid #9aa0ac"></div>
<div class="a" style="left:33px;top:397px;width:100px;height:23px;background:#d6dcea;border-bottom:1px solid #9aa0ac;border-left:1px solid #fafcff"></div>
<div class="a" style="left:36.5px;top:402.5px;font-size:13.8px;line-height:16px;color:#202030">My vocal</div>
<div class="a" style="left:9px;top:421px;width:62px;height:23px;background:#d6dcea;border-right:1px solid #9aa0ac;border-bottom:1px solid #8a909c"></div>
<div class="a" style="left:71px;top:421px;width:62px;height:23px;background:#d6dcea;border-bottom:1px solid #8a909c"></div>
<div class="a" style="left:9px;top:425px;width:62px;text-align:center;font-size:13px;line-height:16px;color:#202030">Mute</div>
<div class="a" style="left:71px;top:425px;width:62px;text-align:center;font-size:13px;line-height:16px;color:#202030">Solo</div>
<div class="a" style="left:13px;top:527px;font-size:13.6px;line-height:15px;color:#2a2a2a">Mono, 44100Hz<br>32-bit float</div>
<div class="a" style="left:9px;top:559px;width:99px;height:23px;background:#dce1eb;border-right:1px solid #a8aebb"></div>
<svg style="left:0;top:396px" width="180" height="190"><path d="M16.5 9 L26.5 18.5 M26.5 9 L16.5 18.5" stroke="#111" stroke-width="1.9"/><path d="M115 9.3 L129 9.3 L122 16.5 Z" fill="#111"/><rect x="23" y="72.8" width="98" height="2.2" fill="#a4a4a4"/><rect x="23.5" y="68.8" width="1" height="5" fill="#9a9a9a"/><rect x="33.1" y="70.8" width="1" height="3" fill="#9a9a9a"/><rect x="42.7" y="70.8" width="1" height="3" fill="#9a9a9a"/><rect x="52.3" y="70.8" width="1" height="3" fill="#9a9a9a"/><rect x="61.9" y="70.8" width="1" height="3" fill="#9a9a9a"/><rect x="71.5" y="70.8" width="1" height="3" fill="#9a9a9a"/><rect x="81.1" y="70.8" width="1" height="3" fill="#9a9a9a"/><rect x="90.7" y="70.8" width="1" height="3" fill="#9a9a9a"/><rect x="100.3" y="70.8" width="1" height="3" fill="#9a9a9a"/><rect x="109.9" y="70.8" width="1" height="3" fill="#9a9a9a"/><rect x="119.5" y="68.8" width="1" height="5" fill="#9a9a9a"/><circle cx="71" cy="73.8" r="6" fill="#5050dc"/><circle cx="71" cy="73.8" r="2" fill="#a8acd4"/><rect x="23" y="111" width="98" height="2.2" fill="#a4a4a4"/><rect x="23.5" y="107.0" width="1" height="5" fill="#9a9a9a"/><rect x="33.1" y="109.0" width="1" height="3" fill="#9a9a9a"/><rect x="42.7" y="109.0" width="1" height="3" fill="#9a9a9a"/><rect x="52.3" y="109.0" width="1" height="3" fill="#9a9a9a"/><rect x="61.9" y="109.0" width="1" height="3" fill="#9a9a9a"/><rect x="71.5" y="109.0" width="1" height="3" fill="#9a9a9a"/><rect x="81.1" y="109.0" width="1" height="3" fill="#9a9a9a"/><rect x="90.7" y="109.0" width="1" height="3" fill="#9a9a9a"/><rect x="100.3" y="109.0" width="1" height="3" fill="#9a9a9a"/><rect x="109.9" y="109.0" width="1" height="3" fill="#9a9a9a"/><rect x="119.5" y="107.0" width="1" height="5" fill="#9a9a9a"/><circle cx="71" cy="112" r="6" fill="#5050dc"/><circle cx="71" cy="112" r="2" fill="#a8acd4"/><rect x="24" y="59.3" width="6" height="1.6" fill="#111"/><rect x="111.5" y="59.3" width="6.5" height="1.6" fill="#111"/><rect x="113.9" y="56.8" width="1.6" height="6.6" fill="#111"/><path d="M52 180 L66 180 L59 173 Z" fill="#111"/><rect x="166.5" y="48.4" width="4" height="1.3" fill="#222"/><rect x="166.5" y="93.4" width="4" height="1.3" fill="#222"/><rect x="166.5" y="139.4" width="4" height="1.3" fill="#222"/></svg>
<div class="a" style="left:24px;top:488px;font-size:12px;line-height:12px;color:#111">L</div>
<div class="a" style="left:111px;top:488px;font-size:12px;line-height:12px;color:#111">R</div>
<div class="a" style="left:129px;width:36px;text-align:right;top:399px;font-size:14.5px;line-height:16px;font-weight:bold;color:#141414">1.0</div>
<div class="a" style="left:129px;width:36px;text-align:right;top:435.5px;font-size:14.5px;line-height:16px;font-weight:normal;color:#141414">0.5</div>
<div class="a" style="left:129px;width:36px;text-align:right;top:481.5px;font-size:14.5px;line-height:16px;font-weight:bold;color:#141414">0.0</div>
<div class="a" style="left:129px;width:36px;text-align:right;top:527.5px;font-size:14.5px;line-height:16px;font-weight:normal;color:#141414">-0.5</div>
<div class="a" style="left:129px;width:36px;text-align:right;top:563.5px;font-size:14.5px;line-height:16px;font-weight:bold;color:#141414">-1.0</div>
<div class="a" style="left:187px;top:399px;font-size:20px;line-height:22px;color:#f0f040">My vocal</div>
<!-- WAVEFORMS -->
<div class="a" style="left:445px;top:397px;width:439px;height:185px;background:#e7eefb"></div>
<svg style="left:0;top:0" width="1200" height="675">
<rect x="173" y="295" width="995" height="1.7" fill="#5656a8"/>
<g fill="#4f4fb6"><rect x="172.8" y="226.6" width="1.7" height="137.4"/><rect x="188.3" y="249.7" width="1.7" height="88.3"/><rect x="203.8" y="249.7" width="1.7" height="88.3"/><rect x="219.4" y="249.7" width="1.7" height="88.3"/><rect x="234.9" y="226.6" width="1.7" height="137.4"/><rect x="250.4" y="249.7" width="1.7" height="88.3"/><rect x="265.9" y="249.7" width="1.7" height="88.3"/><rect x="281.5" y="249.7" width="1.7" height="88.3"/><rect x="297.0" y="226.6" width="1.7" height="137.4"/><rect x="312.5" y="249.7" width="1.7" height="88.3"/><rect x="328.0" y="249.7" width="1.7" height="88.3"/><rect x="343.6" y="249.7" width="1.7" height="88.3"/><rect x="359.1" y="226.6" width="1.7" height="137.4"/><rect x="374.6" y="249.7" width="1.7" height="88.3"/><rect x="390.1" y="249.7" width="1.7" height="88.3"/><rect x="405.6" y="249.7" width="1.7" height="88.3"/><rect x="421.2" y="226.6" width="1.7" height="137.4"/><rect x="436.7" y="249.7" width="1.7" height="88.3"/><rect x="452.2" y="249.7" width="1.7" height="88.3"/><rect x="467.7" y="249.7" width="1.7" height="88.3"/><rect x="483.3" y="226.6" width="1.7" height="137.4"/><rect x="498.8" y="249.7" width="1.7" height="88.3"/><rect x="514.3" y="249.7" width="1.7" height="88.3"/><rect x="529.8" y="249.7" width="1.7" height="88.3"/><rect x="545.4" y="226.6" width="1.7" height="137.4"/><rect x="560.9" y="249.7" width="1.7" height="88.3"/><rect x="576.4" y="249.7" width="1.7" height="88.3"/><rect x="591.9" y="249.7" width="1.7" height="88.3"/><rect x="607.4" y="226.6" width="1.7" height="137.4"/><rect x="623.0" y="249.7" width="1.7" height="88.3"/><rect x="638.5" y="249.7" width="1.7" height="88.3"/><rect x="654.0" y="249.7" width="1.7" height="88.3"/><rect x="669.5" y="226.6" width="1.7" height="137.4"/><rect x="685.1" y="249.7" width="1.7" height="88.3"/><rect x="700.6" y="249.7" width="1.7" height="88.3"/><rect x="716.1" y="249.7" width="1.7" height="88.3"/><rect x="731.6" y="226.6" width="1.7" height="137.4"/><rect x="747.2" y="249.7" width="1.7" height="88.3"/><rect x="762.7" y="249.7" width="1.7" height="88.3"/><rect x="778.2" y="249.7" width="1.7" height="88.3"/><rect x="793.7" y="226.6" width="1.7" height="137.4"/><rect x="809.2" y="249.7" width="1.7" height="88.3"/><rect x="824.8" y="249.7" width="1.7" height="88.3"/><rect x="840.3" y="249.7" width="1.7" height="88.3"/><rect x="855.8" y="226.6" width="1.7" height="137.4"/><rect x="871.3" y="249.7" width="1.7" height="88.3"/><rect x="886.9" y="249.7" width="1.7" height="88.3"/><rect x="902.4" y="249.7" width="1.7" height="88.3"/><rect x="917.9" y="226.6" width="1.7" height="137.4"/><rect x="933.4" y="249.7" width="1.7" height="88.3"/><rect x="949.0" y="249.7" width="1.7" height="88.3"/><rect x="964.5" y="249.7" width="1.7" height="88.3"/><rect x="980.0" y="226.6" width="1.7" height="137.4"/><rect x="995.5" y="249.7" width="1.7" height="88.3"/><rect x="1011.0" y="249.7" width="1.7" height="88.3"/><rect x="1026.6" y="249.7" width="1.7" height="88.3"/><rect x="1042.1" y="226.6" width="1.7" height="137.4"/><rect x="1057.6" y="249.7" width="1.7" height="88.3"/><rect x="1073.1" y="249.7" width="1.7" height="88.3"/><rect x="1088.7" y="249.7" width="1.7" height="88.3"/><rect x="1104.2" y="226.6" width="1.7" height="137.4"/><rect x="1119.7" y="249.7" width="1.7" height="88.3"/><rect x="1135.2" y="249.7" width="1.7" height="88.3"/><rect x="1150.7" y="249.7" width="1.7" height="88.3"/></g>
<rect x="173" y="489" width="995" height="1.2" fill="#4444b8"/>
<path d="M173 489.5V488.6H174V488.6H175V488.6H176V488.6H177V488.6H178V488.6H179V488.6H180V488.6H181V488.6H182V488.6H183V488.6H184V488.6H185V488.6H186V488.6H187V488.6H188V488.6H189V488.2H190V486.4H191V484.9H192V482.9H193V485.9H194V487.8H195V488.0H196V488.0H197V488.0H198V470.0H199V440.3H200V442.8H201V447.0H202V450.5H203V457.8H204V457.7H205V441.0H206V445.7H207V453.1H208V466.2H209V467.9H210V467.3H211V461.5H212V461.2H213V459.6H214V467.8H215V475.7H216V463.9H217V452.4H218V451.7H219V451.7H220V463.0H221V464.1H222V465.9H223V463.7H224V461.4H225V456.7H226V457.4H227V457.6H228V465.4H229V469.4H230V481.8H231V486.7H232V486.2H233V485.8H234V482.8H235V478.6H236V475.9H237V469.8H238V470.7H239V469.6H240V470.1H241V468.5H242V468.4H243V480.1H244V483.3H245V486.0H246V486.5H247V486.2H248V484.9H249V482.0H250V475.6H251V461.1H252V462.6H253V465.0H254V471.5H255V472.7H256V467.2H257V466.3H258V466.1H259V464.9H260V467.5H261V469.9H262V469.6H263V470.8H264V467.2H265V462.4H266V460.1H267V458.4H268V460.7H269V459.5H270V459.2H271V460.4H272V473.8H273V474.6H274V476.1H275V478.9H276V480.2H277V475.1H278V471.3H279V468.8H280V467.4H281V458.0H282V449.1H283V450.3H284V452.3H285V454.3H286V462.0H287V463.8H288V477.4H289V465.8H290V471.4H291V478.7H292V476.5H293V465.7H294V458.0H295V455.7H296V458.5H297V457.0H298V457.9H299V460.8H300V462.2H301V462.5H302V464.2H303V464.3H304V463.7H305V471.1H306V475.1H307V485.9H308V486.3H309V486.8H310V486.8H311V486.8H312V486.8H313V486.7H314V482.9H315V479.7H316V477.5H317V475.8H318V480.1H319V483.7H320V460.7H321V444.6H322V460.3H323V449.1H324V442.8H325V459.2H326V462.7H327V469.3H328V470.8H329V474.6H330V473.4H331V470.0H332V481.4H333V475.6H334V454.3H335V464.0H336V472.6H337V481.1H338V482.8H339V476.6H340V469.4H341V480.4H342V486.7H343V486.2H344V485.7H345V479.3H346V473.2H347V466.3H348V462.4H349V472.4H350V478.3H351V482.1H352V485.4H353V478.8H354V469.9H355V461.9H356V452.8H357V452.0H358V451.6H359V451.6H360V453.3H361V457.7H362V462.1H363V457.6H364V451.5H365V454.8H366V455.6H367V456.5H368V455.5H369V456.5H370V454.2H371V451.9H372V474.3H373V475.9H374V450.3H375V455.5H376V466.5H377V465.5H378V466.1H379V471.2H380V469.0H381V457.3H382V457.9H383V459.8H384V463.5H385V461.1H386V461.6H387V468.7H388V478.4H389V477.9H390V473.9H391V469.4H392V478.7H393V479.8H394V476.5H395V472.3H396V464.1H397V462.0H398V469.9H399V471.1H400V464.2H401V459.2H402V469.0H403V475.0H404V477.8H405V478.9H406V475.3H407V472.2H408V465.4H409V460.0H410V461.8H411V460.7H412V462.1H413V469.1H414V474.9H415V477.5H416V479.8H417V472.8H418V460.2H419V469.7H420V475.4H421V478.2H422V479.7H423V476.9H424V475.1H425V473.0H426V471.5H427V471.0H428V473.6H429V473.9H430V473.6H431V475.5H432V476.9H433V478.4H434V480.4H435V481.9H436V483.5H437V484.2H438V485.1H439V485.6H440V486.4H441V486.8H442V486.8H443V486.8H444V449.1H445V452.8H446V450.2H447V451.3H448V449.7H449V452.3H450V457.4H451V457.6H452V458.5H453V449.1H454V441.5H455V440.8H456V443.0H457V448.5H458V456.7H459V481.6H460V485.7H461V484.3H462V466.5H463V460.4H464V449.0H465V454.2H466V460.1H467V461.2H468V463.9H469V467.6H470V466.7H471V468.3H472V469.9H473V483.2H474V469.7H475V441.9H476V445.4H477V450.0H478V452.3H479V451.8H480V467.9H481V474.8H482V474.1H483V460.2H484V437.4H485V449.1H486V457.7H487V472.3H488V472.3H489V459.5H490V451.8H491V454.7H492V458.6H493V459.4H494V461.4H495V466.4H496V471.3H497V469.9H498V469.6H499V480.0H500V486.4H501V480.6H502V473.6H503V464.6H504V458.8H505V452.8H506V457.5H507V459.3H508V462.1H509V460.3H510V460.6H511V468.6H512V474.0H513V482.1H514V480.2H515V476.0H516V475.8H517V482.0H518V485.9H519V488.5H520V488.6H521V488.6H522V488.6H523V488.0H524V486.7H525V485.1H526V479.0H527V472.7H528V468.6H529V477.0H530V477.0H531V473.6H532V470.7H533V466.2H534V471.8H535V474.1H536V477.9H537V479.8H538V485.2H539V486.6H540V478.1H541V470.5H542V464.8H543V466.5H544V468.7H545V469.5H546V470.7H547V472.3H548V467.4H549V459.8H550V452.3H551V451.6H552V454.7H553V459.2H554V455.8H555V458.0H556V454.3H557V456.4H558V450.7H559V454.0H560V458.6H561V466.3H562V474.2H563V480.3H564V486.0H565V483.5H566V472.0H567V453.3H568V454.1H569V458.4H570V464.7H571V462.0H572V459.3H573V458.0H574V451.0H575V455.9H576V461.6H577V465.6H578V472.5H579V469.5H580V455.8H581V443.7H582V447.7H583V451.5H584V454.7H585V459.8H586V462.6H587V472.5H588V474.9H589V458.1H590V448.0H591V445.6H592V448.3H593V442.5H594V445.6H595V469.5H596V482.2H597V485.3H598V485.0H599V484.1H600V483.6H601V483.0H602V484.1H603V485.5H604V486.5H605V487.2H606V487.7H607V488.2H608V473.8H609V432.0H610V434.9H611V437.6H612V439.0H613V443.3H614V451.0H615V455.1H616V444.9H617V462.8H618V470.7H619V468.6H620V466.0H621V464.8H622V468.6H623V471.0H624V473.8H625V475.3H626V477.7H627V481.5H628V485.5H629V488.6H630V488.6H631V488.6H632V488.6H633V488.6H634V488.6H635V488.6H636V488.6H637V488.6H638V488.6H639V470.4H640V461.1H641V453.6H642V444.5H643V443.3H644V444.8H645V447.2H646V446.6H647V450.1H648V452.9H649V451.5H650V447.8H651V451.7H652V455.0H653V450.2H654V469.3H655V482.2H656V488.6H657V488.6H658V488.6H659V488.6H660V488.6H661V488.6H662V488.6H663V488.6H664V484.8H665V471.2H666V457.9H667V467.5H668V476.5H669V477.4H670V474.7H671V470.8H672V466.5H673V470.4H674V478.3H675V475.8H676V478.4H677V483.1H678V484.5H679V478.7H680V473.8H681V478.7H682V483.8H683V486.5H684V487.0H685V487.9H686V488.6H687V488.6H688V488.6H689V488.6H690V484.2H691V476.6H692V471.6H693V475.5H694V475.6H695V476.1H696V476.2H697V473.3H698V470.1H699V465.2H700V463.8H701V458.5H702V463.5H703V467.4H704V470.1H705V474.3H706V474.2H707V462.9H708V467.8H709V474.2H710V472.6H711V469.3H712V467.1H713V476.1H714V479.8H715V479.3H716V479.2H717V481.5H718V484.2H719V484.5H720V480.5H721V474.4H722V451.4H723V454.3H724V459.1H725V465.8H726V471.7H727V468.3H728V451.2H729V457.5H730V457.1H731V454.5H732V450.4H733V450.4H734V452.4H735V449.4H736V446.4H737V442.6H738V445.1H739V446.4H740V448.3H741V445.5H742V464.7H743V466.1H744V455.0H745V454.9H746V456.8H747V453.1H748V445.8H749V446.9H750V445.9H751V448.7H752V453.6H753V460.8H754V467.7H755V468.4H756V467.7H757V474.1H758V474.7H759V466.7H760V469.9H761V478.0H762V481.1H763V484.5H764V481.6H765V478.8H766V486.6H767V487.1H768V485.3H769V483.3H770V484.0H771V484.3H772V484.4H773V484.3H774V483.7H775V483.4H776V483.2H777V482.0H778V481.8H779V481.2H780V481.1H781V481.9H782V482.6H783V482.8H784V482.7H785V483.4H786V483.7H787V483.2H788V483.4H789V483.8H790V483.9H791V484.2H792V484.2H793V484.1H794V484.1H795V484.7H796V484.7H797V484.7H798V484.3H799V484.9H800V484.8H801V484.5H802V484.7H803V485.0H804V485.2H805V485.3H806V486.0H807V485.8H808V486.5H809V486.4H810V486.4H811V486.7H812V486.6H813V486.7H814V486.8H815V446.7H816V444.0H817V443.7H818V478.3H819V463.8H820V437.4H821V439.4H822V445.2H823V450.9H824V462.0H825V457.9H826V453.2H827V461.4H828V460.8H829V447.7H830V441.5H831V434.0H832V445.0H833V453.0H834V461.6H835V467.8H836V470.2H837V471.0H838V472.4H839V477.8H840V481.2H841V484.2H842V486.5H843V486.8H844V486.8H845V486.8H846V486.8H847V486.8H848V486.8H849V486.8H850V483.4H851V478.8H852V477.7H853V479.3H854V480.4H855V481.6H856V481.7H857V483.1H858V483.2H859V483.7H860V485.6H861V486.8H862V484.2H863V481.7H864V477.8H865V478.7H866V479.8H867V479.3H868V480.2H869V481.3H870V481.1H871V481.6H872V482.3H873V479.3H874V480.1H875V481.1H876V481.4H877V482.2H878V483.8H879V485.1H880V486.1H881V486.4H882V482.9H883V459.3H884V444.8H885V449.3H886V458.8H887V471.0H888V474.9H889V476.8H890V476.2H891V471.7H892V439.2H893V443.2H894V443.9H895V456.1H896V456.5H897V432.6H898V433.8H899V437.4H900V445.6H901V447.9H902V465.9H903V479.2H904V466.6H905V461.3H906V471.1H907V466.6H908V454.0H909V441.0H910V439.5H911V439.7H912V443.0H913V447.0H914V451.6H915V455.3H916V459.9H917V474.0H918V475.4H919V467.0H920V449.6H921V432.2H922V438.3H923V447.0H924V452.3H925V455.6H926V464.1H927V475.3H928V481.1H929V483.7H930V485.7H931V484.6H932V474.0H933V462.6H934V470.0H935V468.5H936V466.9H937V461.7H938V465.5H939V466.6H940V460.1H941V453.2H942V445.7H943V438.8H944V459.6H945V457.3H946V449.7H947V438.3H948V447.3H949V449.2H950V448.4H951V451.3H952V471.6H953V454.6H954V447.6H955V441.3H956V447.9H957V452.5H958V454.6H959V450.8H960V450.2H961V449.6H962V448.5H963V451.6H964V456.0H965V455.0H966V457.2H967V455.5H968V458.2H969V457.8H970V455.2H971V453.5H972V453.2H973V457.1H974V458.7H975V457.6H976V461.2H977V462.6H978V464.9H979V465.3H980V467.5H981V464.5H982V462.9H983V462.0H984V461.9H985V460.3H986V468.8H987V474.1H988V474.8H989V474.4H990V475.3H991V476.0H992V476.0H993V476.8H994V475.5H995V474.9H996V475.4H997V460.6H998V443.6H999V437.1H1000V441.9H1001V442.1H1002V452.3H1003V464.0H1004V467.6H1005V473.2H1006V475.6H1007V480.6H1008V480.2H1009V459.4H1010V449.4H1011V463.1H1012V452.5H1013V450.7H1014V467.7H1015V463.8H1016V454.2H1017V443.1H1018V435.7H1019V448.4H1020V458.4H1021V452.4H1022V446.6H1023V445.5H1024V446.0H1025V448.2H1026V445.7H1027V441.8H1028V437.8H1029V433.8H1030V453.0H1031V463.1H1032V456.7H1033V450.6H1034V437.7H1035V433.3H1036V445.2H1037V448.0H1038V455.7H1039V459.0H1040V465.4H1041V465.2H1042V469.2H1043V463.6H1044V457.1H1045V462.0H1046V463.4H1047V453.8H1048V447.1H1049V459.8H1050V470.8H1051V473.0H1052V474.6H1053V476.3H1054V479.6H1055V481.8H1056V484.2H1057V485.2H1058V485.5H1059V486.2H1060V486.5H1061V485.9H1062V484.6H1063V483.2H1064V481.7H1065V480.0H1066V478.3H1067V479.4H1068V480.0H1069V480.9H1070V481.7H1071V481.2H1072V480.6H1073V480.9H1074V480.1H1075V479.7H1076V479.5H1077V478.6H1078V478.5H1079V477.1H1080V475.6H1081V470.3H1082V474.2H1083V479.9H1084V469.4H1085V454.0H1086V444.1H1087V447.9H1088V449.4H1089V453.0H1090V460.2H1091V462.3H1092V461.1H1093V461.2H1094V462.0H1095V461.3H1096V460.5H1097V463.0H1098V461.8H1099V452.1H1100V442.5H1101V438.5H1102V455.9H1103V464.4H1104V468.2H1105V467.2H1106V468.0H1107V471.4H1108V472.8H1109V476.2H1110V477.7H1111V479.1H1112V481.2H1113V482.7H1114V479.9H1115V447.8H1116V449.2H1117V457.1H1118V463.8H1119V467.4H1120V474.7H1121V476.6H1122V479.0H1123V481.5H1124V482.7H1125V484.3H1126V484.8H1127V485.7H1128V482.0H1129V459.7H1130V434.5H1131V445.4H1132V458.0H1133V463.0H1134V471.7H1135V474.2H1136V470.4H1137V467.6H1138V467.0H1139V469.7H1140V468.6H1141V470.4H1142V466.9H1143V465.7H1144V465.0H1145V463.2H1146V457.6H1147V457.3H1148V453.0H1149V448.9H1150V442.8H1151V444.5H1152V452.9H1153V449.9H1154V446.6H1155V444.5H1156V449.4H1157V453.2H1158V456.6H1159V450.3H1160V443.5H1161V434.6H1162V430.6H1163V429.3H1164V435.7H1165V440.3H1166V437.2H1167V437.3H1168V514.0H1167V522.1H1166V529.4H1165V541.9H1164V534.5H1163V534.7H1162V531.6H1161V529.8H1160V526.0H1159V527.8H1158V523.9H1157V528.2H1156V524.9H1155V525.5H1154V534.2H1153V536.6H1152V542.5H1151V538.1H1150V528.0H1149V524.7H1148V516.6H1147V511.4H1146V509.5H1145V507.1H1144V507.6H1143V507.1H1142V505.5H1141V504.8H1140V504.1H1139V502.5H1138V500.9H1137V501.2H1136V502.5H1135V503.1H1134V503.3H1133V511.5H1132V526.9H1131V548.9H1130V530.6H1129V509.6H1128V493.2H1127V494.4H1126V496.6H1125V498.7H1124V501.9H1123V505.0H1122V508.8H1121V511.2H1120V514.6H1119V518.6H1118V526.5H1117V526.8H1116V535.5H1115V514.7H1114V501.8H1113V495.2H1112V496.4H1111V499.2H1110V502.2H1109V502.5H1108V504.7H1107V507.2H1106V511.9H1105V516.8H1104V525.5H1103V533.6H1102V547.3H1101V536.4H1100V523.5H1099V506.9H1098V509.2H1097V514.8H1096V519.3H1095V521.9H1094V520.9H1093V522.3H1092V524.6H1091V524.2H1090V522.9H1089V526.9H1088V527.8H1087V528.1H1086V524.9H1085V508.1H1084V495.9H1083V503.4H1082V507.5H1081V502.2H1080V498.5H1079V499.0H1078V498.1H1077V497.4H1076V496.6H1075V496.4H1074V495.9H1073V496.0H1072V495.4H1071V496.4H1070V496.4H1069V497.7H1068V498.6H1067V498.6H1066V498.0H1065V495.5H1064V493.9H1063V494.3H1062V494.1H1061V494.3H1060V494.3H1059V493.9H1058V494.1H1057V497.5H1056V504.3H1055V512.3H1054V519.6H1053V504.0H1052V497.5H1051V508.4H1050V517.9H1049V531.6H1048V520.1H1047V504.6H1046V510.9H1045V527.0H1044V537.8H1043V519.6H1042V502.9H1041V499.4H1040V504.6H1039V512.5H1038V526.5H1037V545.5H1036V533.1H1035V518.0H1034V510.6H1033V504.6H1032V501.8H1031V512.8H1030V525.9H1029V538.4H1028V531.0H1027V517.5H1026V522.1H1025V532.9H1024V543.5H1023V525.4H1022V513.2H1021V532.2H1020V545.4H1019V540.8H1018V528.9H1017V519.4H1016V503.2H1015V506.7H1014V533.7H1013V534.0H1012V532.7H1011V528.4H1010V523.6H1009V512.2H1008V498.9H1007V500.1H1006V505.8H1005V511.1H1004V519.2H1003V525.6H1002V536.7H1001V547.8H1000V540.1H999V540.3H998V521.4H997V503.8H996V502.3H995V502.7H994V503.2H993V503.2H992V505.1H991V505.5H990V505.5H989V508.9H988V511.8H987V515.3H986V513.8H985V518.1H984V518.8H983V520.5H982V519.1H981V518.7H980V516.6H979V518.5H978V517.6H977V519.9H976V520.5H975V521.0H974V521.0H973V522.7H972V523.0H971V522.5H970V522.6H969V522.8H968V521.3H967V521.5H966V523.4H965V523.5H964V522.9H963V523.7H962V526.6H961V531.1H960V531.8H959V534.8H958V540.0H957V539.5H956V543.3H955V531.1H954V519.4H953V510.9H952V512.7H951V521.5H950V526.7H949V533.7H948V537.7H947V531.7H946V514.8H945V520.1H944V536.7H943V530.1H942V518.7H941V510.2H940V514.6H939V519.1H938V512.0H937V505.5H936V505.8H935V509.6H934V515.3H933V507.6H932V495.6H931V493.7H930V493.7H929V495.1H928V499.7H927V504.5H926V513.2H925V520.0H924V533.3H923V539.0H922V546.0H921V550.8H920V519.5H919V500.4H918V504.6H917V509.7H916V514.3H915V514.9H914V520.0H913V522.6H912V531.2H911V541.5H910V551.8H909V532.0H908V512.7H907V504.6H906V512.5H905V518.6H904V511.8H903V505.3H902V507.2H901V513.1H900V520.1H899V528.4H898V539.7H897V528.4H896V518.6H895V523.2H894V530.3H893V538.3H892V516.6H891V499.8H890V503.1H889V506.4H888V512.7H887V524.0H886V523.6H885V520.4H884V510.4H883V495.7H882V494.3H881V494.8H880V495.8H879V496.6H878V497.1H877V496.4H876V497.1H875V496.9H874V498.3H873V497.5H872V498.5H871V498.2H870V499.5H869V501.9H868V504.6H867V508.6H866V503.0H865V497.5H864V493.3H863V493.7H862V493.5H861V493.5H860V493.6H859V494.3H858V495.4H857V496.1H856V497.4H855V498.2H854V499.8H853V501.8H852V499.5H851V495.3H850V492.5H849V492.5H848V492.8H847V492.7H846V492.9H845V493.1H844V493.5H843V493.9H842V495.9H841V497.8H840V499.8H839V503.7H838V508.7H837V513.3H836V521.0H835V527.7H834V533.8H833V545.9H832V541.8H831V533.8H830V521.5H829V518.1H828V523.9H827V529.0H826V525.6H825V528.9H824V535.1H823V543.0H822V543.1H821V543.9H820V546.1H819V520.6H818V501.4H817V511.5H816V551.7H815V492.2H814V492.4H813V492.7H812V492.6H811V492.7H810V493.0H809V493.0H808V492.9H807V493.1H806V493.4H805V493.5H804V493.2H803V493.7H802V493.9H801V493.8H800V494.1H799V494.1H798V494.6H797V494.8H796V495.0H795V494.9H794V495.4H793V495.6H792V495.6H791V496.0H790V495.8H789V496.0H788V495.7H787V495.9H786V495.4H785V495.3H784V495.8H783V496.1H782V496.2H781V496.9H780V496.9H779V496.0H778V495.0H777V493.5H776V492.7H775V492.6H774V493.5H773V494.1H772V494.3H771V494.0H770V493.4H769V492.9H768V493.3H767V494.6H766V496.7H765V498.3H764V496.2H763V495.0H762V494.4H761V497.5H760V506.1H759V512.8H758V506.6H757V501.4H756V504.9H755V512.1H754V513.7H753V515.3H752V517.6H751V523.6H750V529.1H749V525.6H748V516.4H747V517.9H746V520.4H745V525.2H744V511.9H743V509.6H742V526.0H741V537.6H740V532.6H739V533.3H738V528.2H737V516.7H736V508.4H735V503.7H734V523.1H733V520.8H732V511.0H731V506.0H730V514.8H729V521.2H728V516.1H727V509.3H726V507.9H725V513.2H724V517.8H723V525.7H722V516.7H721V506.7H720V497.5H719V495.3H718V499.4H717V503.4H716V492.4H715V496.1H714V500.7H713V507.3H712V507.6H711V508.6H710V510.3H709V510.9H708V511.9H707V509.3H706V506.2H705V503.0H704V502.7H703V508.3H702V513.0H701V512.0H700V510.2H699V508.4H698V507.6H697V506.6H696V507.1H695V506.3H694V506.2H693V507.4H692V502.2H691V495.9H690V491.4H689V491.4H688V491.4H687V491.4H686V491.4H685V491.4H684V491.4H683V493.0H682V497.4H681V502.3H680V492.7H679V495.6H678V500.2H677V505.3H676V508.3H675V506.7H674V507.6H673V507.5H672V500.9H671V495.1H670V494.3H669V499.0H668V503.8H667V518.9H666V525.2H665V497.2H664V491.4H663V491.4H662V491.4H661V491.4H660V491.4H659V491.4H658V491.4H657V491.4H656V495.9H655V504.3H654V512.2H653V515.7H652V522.7H651V527.4H650V527.5H649V527.4H648V524.5H647V532.1H646V535.4H645V537.6H644V537.2H643V528.9H642V523.8H641V517.2H640V511.3H639V490.2H638V490.2H637V490.2H636V490.2H635V490.2H634V490.2H633V490.2H632V490.2H631V490.2H630V490.2H629V491.9H628V494.3H627V496.9H626V499.6H625V502.6H624V506.2H623V505.1H622V505.9H621V507.3H620V508.3H619V512.7H618V531.4H617V542.1H616V532.5H615V536.8H614V542.5H613V541.4H612V534.4H611V530.0H610V527.7H609V513.7H608V498.1H607V491.6H606V492.1H605V492.4H604V493.0H603V493.6H602V494.0H601V494.5H600V495.4H599V496.2H598V497.6H597V503.6H596V508.1H595V511.9H594V516.9H593V519.6H592V526.2H591V535.3H590V521.2H589V496.9H588V498.3H587V503.5H586V507.4H585V513.6H584V516.6H583V519.0H582V523.3H581V512.7H580V500.6H579V498.4H578V503.0H577V509.5H576V518.2H575V529.9H574V520.6H573V511.9H572V511.7H571V518.1H570V525.5H569V530.0H568V522.4H567V511.0H566V501.1H565V496.6H564V499.7H563V504.0H562V512.3H561V519.7H560V519.6H559V519.4H558V519.5H557V517.6H556V514.2H555V515.7H554V520.3H553V523.7H552V519.9H551V515.9H550V512.6H549V509.8H548V508.3H547V507.9H546V509.1H545V512.3H544V514.6H543V516.8H542V504.6H541V497.1H540V493.9H539V497.2H538V502.4H537V504.4H536V507.1H535V510.6H534V511.4H533V508.6H532V505.3H531V502.0H530V502.8H529V508.7H528V512.5H527V506.0H526V499.9H525V494.3H524V492.5H523V492.4H522V492.5H521V492.4H520V492.5H519V495.7H518V498.3H517V501.6H516V497.0H515V493.4H514V499.8H513V509.8H512V513.7H511V518.4H510V516.5H509V512.6H508V520.9H507V542.7H506V536.3H505V528.3H504V518.9H503V509.2H502V500.0H501V495.9H500V502.9H499V509.6H498V513.6H497V522.2H496V520.6H495V514.2H494V512.9H493V525.2H492V530.2H491V525.6H490V516.6H489V507.5H488V514.1H487V530.0H486V535.5H485V541.4H484V548.1H483V531.2H482V517.5H481V515.0H480V525.8H479V532.6H478V546.2H477V554.0H476V530.1H475V506.1H474V497.2H473V509.1H472V510.2H471V511.0H470V515.2H469V515.1H468V517.7H467V523.6H466V534.1H465V542.7H464V518.7H463V495.9H462V492.5H461V492.5H460V495.6H459V502.4H458V512.3H457V524.2H456V542.3H455V535.1H454V537.5H453V534.1H452V532.0H451V524.6H450V523.5H449V527.6H448V530.2H447V538.1H446V523.7H445V499.8H444V493.1H443V492.8H442V492.6H441V493.1H440V494.0H439V495.2H438V496.0H437V496.7H436V498.0H435V499.7H434V501.1H433V502.8H432V505.0H431V507.9H430V509.5H429V507.2H428V507.1H427V504.3H426V503.7H425V500.9H424V499.5H423V499.8H422V500.0H421V500.1H420V508.0H419V516.1H418V513.2H417V507.0H416V504.9H415V511.8H414V518.2H413V510.8H412V507.7H411V501.9H410V499.6H409V504.1H408V506.0H407V503.6H406V500.6H405V502.3H404V508.3H403V512.8H402V515.4H401V509.9H400V502.9H399V505.5H398V511.8H397V516.0H396V504.3H395V494.4H394V499.1H393V504.9H392V502.2H391V498.2H390V501.2H389V510.8H388V516.5H387V515.6H386V512.2H385V513.5H384V517.2H383V521.8H382V522.4H381V518.6H380V514.9H379V511.6H378V515.2H377V520.8H376V526.3H375V516.6H374V506.0H373V496.0H372V509.0H371V525.8H370V523.2H369V522.1H368V521.4H367V519.7H366V526.3H365V529.8H364V535.6H363V527.5H362V518.5H361V518.1H360V523.4H359V530.4H358V533.6H357V532.4H356V520.2H355V508.2H354V495.3H353V495.1H352V498.7H351V503.0H350V505.4H349V512.3H348V510.9H347V504.7H346V501.1H345V497.8H344V494.4H343V493.9H342V500.8H341V507.6H340V503.7H339V498.3H338V497.4H337V502.2H336V516.4H335V536.3H334V523.5H333V500.1H332V510.9H331V510.3H330V506.7H329V506.2H328V517.0H327V524.7H326V532.8H325V535.3H324V538.5H323V534.9H322V533.5H321V523.6H320V505.1H319V495.1H318V500.3H317V505.8H316V502.1H315V497.6H314V493.4H313V492.4H312V492.7H311V493.0H310V493.2H309V493.3H308V493.7H307V509.5H306V510.5H305V508.9H304V510.9H303V512.9H302V519.4H301V521.3H300V524.0H299V523.0H298V515.4H297V512.8H296V515.6H295V518.0H294V512.5H293V503.4H292V501.2H291V504.9H290V508.2H289V504.1H288V500.8H287V511.1H286V521.7H285V524.4H284V528.4H283V513.0H282V502.5H281V503.2H280V504.9H279V506.4H278V504.8H277V502.0H276V498.7H275V497.2H274V497.5H273V499.5H272V507.5H271V516.9H270V527.3H269V529.0H268V531.4H267V516.9H266V502.1H265V498.2H264V500.0H263V501.5H262V507.3H261V510.9H260V513.2H259V513.0H258V513.9H257V512.4H256V510.9H255V510.6H254V512.4H253V517.3H252V521.6H251V516.8H250V507.4H249V503.0H248V498.5H247V494.7H246V491.9H245V493.9H244V497.6H243V498.6H242V499.8H241V500.0H240V502.8H239V503.4H238V505.4H237V501.2H236V497.8H235V495.3H234V495.1H233V494.1H232V493.6H231V500.9H230V505.9H229V510.6H228V516.7H227V521.8H226V524.7H225V533.3H224V530.3H223V527.4H222V528.4H221V523.1H220V524.0H219V523.5H218V520.4H217V504.7H216V494.6H215V504.4H214V513.0H213V517.5H212V516.3H211V512.3H210V512.8H209V523.1H208V530.3H207V541.6H206V527.4H205V503.0H204V520.5H203V540.1H202V534.9H201V527.8H200V513.7H199V498.3H198V494.8H197V491.9H196V492.7H195V493.8H194V495.8H193V492.9H192V490.2H191V490.2H190V490.2H189V490.2H188V490.2H187V490.2H186V490.2H185V490.2H184V490.2H183V490.2H182V490.2H181V490.2H180V490.2H179V490.2H178V490.2H177V490.2H176V490.2H175V490.2H174V490.2H173Z" fill="#3434c6"/>
<path d="M173 489.5V489.0H174V489.0H175V489.0H176V489.0H177V489.0H178V489.0H179V489.0H180V489.0H181V489.0H182V489.0H183V489.0H184V489.0H185V489.0H186V489.0H187V489.0H188V489.0H189V489.0H190V489.0H191V489.0H192V489.0H193V489.0H194V489.0H195V489.0H196V489.0H197V489.0H198V483.6H199V469.5H200V465.2H201V467.2H202V467.4H203V471.9H204V476.1H205V477.5H206V471.8H207V471.5H208V472.9H209V474.8H210V475.4H211V476.2H212V476.6H213V479.6H214V482.7H215V485.8H216V485.5H217V477.6H218V469.7H219V469.3H220V469.9H221V468.4H222V470.0H223V469.8H224V469.8H225V470.3H226V470.6H227V472.8H228V474.7H229V477.5H230V481.8H231V487.6H232V486.2H233V485.8H234V483.2H235V482.4H236V482.2H237V481.7H238V481.9H239V481.7H240V482.3H241V482.4H242V482.8H243V484.1H244V486.2H245V487.7H246V486.5H247V486.2H248V484.9H249V483.6H250V482.3H251V481.4H252V480.3H253V479.0H254V478.4H255V478.1H256V478.6H257V478.6H258V478.8H259V479.3H260V478.9H261V477.8H262V477.4H263V476.8H264V475.2H265V475.2H266V474.7H267V474.6H268V475.9H269V476.5H270V477.2H271V477.4H272V478.4H273V478.2H274V478.4H275V478.9H276V480.2H277V478.7H278V478.7H279V477.3H280V475.3H281V474.1H282V472.9H283V473.3H284V475.2H285V476.1H286V476.7H287V478.4H288V478.9H289V480.9H290V482.0H291V481.8H292V479.3H293V476.8H294V475.3H295V475.2H296V473.8H297V473.7H298V473.7H299V472.7H300V472.8H301V475.0H302V475.9H303V477.6H304V478.6H305V480.0H306V482.1H307V485.9H308V487.9H309V488.1H310V488.2H311V488.3H312V488.4H313V487.4H314V486.1H315V485.1H316V484.3H317V481.9H318V480.1H319V483.7H320V475.2H321V472.1H322V470.0H323V470.5H324V471.3H325V472.7H326V472.4H327V474.6H328V478.6H329V481.8H330V485.4H331V484.9H332V484.6H333V484.2H334V483.8H335V483.3H336V483.1H337V483.9H338V484.3H339V485.1H340V485.8H341V486.5H342V487.3H343V487.6H344V485.9H345V484.6H346V483.0H347V481.4H348V481.1H349V482.5H350V484.3H351V485.9H352V487.5H353V483.4H354V477.2H355V472.2H356V467.5H357V467.9H358V467.9H359V467.4H360V467.9H361V467.0H362V467.4H363V469.0H364V469.0H365V470.5H366V471.0H367V471.7H368V473.0H369V475.2H370V476.8H371V478.1H372V480.1H373V478.0H374V474.8H375V471.7H376V470.1H377V472.0H378V472.2H379V473.5H380V474.8H381V475.8H382V476.6H383V477.1H384V477.9H385V479.5H386V480.1H387V481.4H388V482.5H389V482.8H390V482.0H391V481.7H392V481.1H393V480.6H394V480.4H395V479.6H396V479.2H397V478.2H398V477.8H399V476.6H400V476.7H401V475.2H402V475.6H403V476.0H404V477.8H405V478.9H406V478.1H407V478.5H408V478.7H409V479.2H410V479.7H411V479.3H412V480.1H413V480.0H414V480.2H415V480.6H416V480.6H417V480.9H418V481.1H419V480.8H420V481.3H421V481.3H422V481.7H423V481.4H424V481.5H425V481.5H426V480.8H427V480.6H428V480.5H429V480.5H430V480.8H431V481.3H432V482.1H433V482.6H434V483.4H435V484.2H436V484.9H437V485.5H438V486.1H439V486.8H440V487.3H441V487.8H442V487.9H443V487.9H444V481.8H445V472.8H446V471.9H447V471.4H448V472.4H449V471.1H450V470.9H451V470.0H452V471.1H453V469.2H454V471.2H455V472.3H456V472.4H457V477.5H458V481.9H459V486.2H460V486.8H461V484.3H462V480.3H463V477.0H464V476.6H465V477.5H466V477.6H467V478.5H468V478.4H469V479.4H470V481.4H471V483.4H472V485.5H473V487.6H474V483.3H475V473.2H476V464.0H477V468.3H478V471.1H479V475.0H480V478.2H481V479.8H482V477.5H483V476.1H484V474.3H485V473.5H486V473.0H487V473.6H488V474.0H489V474.9H490V474.8H491V475.6H492V476.0H493V476.5H494V476.8H495V477.7H496V478.9H497V479.4H498V482.0H499V484.8H500V487.7H501V485.9H502V481.9H503V478.0H504V474.1H505V470.8H506V471.5H507V473.1H508V474.7H509V476.4H510V477.9H511V479.5H512V480.8H513V482.8H514V484.1H515V485.8H516V486.8H517V487.2H518V487.6H519V488.5H520V488.6H521V488.6H522V488.6H523V488.0H524V486.7H525V485.1H526V483.6H527V483.0H528V482.6H529V482.7H530V482.9H531V483.1H532V482.8H533V483.1H534V482.6H535V484.0H536V484.9H537V485.9H538V487.0H539V487.6H540V485.5H541V483.3H542V481.2H543V478.8H544V477.2H545V476.4H546V476.3H547V475.3H548V474.1H549V473.8H550V472.9H551V473.1H552V472.5H553V471.7H554V470.8H555V470.6H556V470.7H557V470.8H558V471.4H559V472.0H560V474.1H561V475.8H562V477.4H563V481.3H564V486.1H565V486.8H566V483.4H567V480.0H568V476.6H569V474.1H570V473.2H571V474.0H572V475.2H573V475.7H574V475.5H575V476.8H576V475.0H577V474.4H578V473.2H579V470.8H580V469.8H581V468.9H582V471.7H583V472.8H584V474.8H585V476.9H586V476.7H587V475.5H588V474.9H589V472.6H590V471.3H591V468.9H592V468.0H593V470.1H594V476.3H595V482.6H596V488.5H597V488.5H598V488.5H599V488.5H600V488.5H601V488.5H602V488.5H603V488.5H604V488.5H605V488.5H606V488.5H607V488.5H608V483.2H609V467.3H610V461.1H611V463.1H612V463.2H613V465.1H614V466.2H615V469.4H616V471.8H617V474.7H618V477.2H619V479.0H620V479.9H621V481.1H622V482.3H623V483.3H624V484.6H625V485.8H626V486.8H627V488.0H628V488.5H629V488.6H630V488.6H631V488.6H632V488.6H633V488.6H634V488.6H635V488.6H636V488.6H637V488.6H638V488.6H639V481.7H640V475.1H641V469.3H642V465.4H643V466.0H644V466.9H645V466.6H646V466.3H647V466.2H648V467.5H649V467.5H650V468.0H651V467.9H652V474.0H653V480.3H654V486.4H655V488.0H656V488.6H657V488.6H658V488.6H659V488.6H660V488.6H661V488.6H662V488.6H663V488.6H664V484.8H665V480.9H666V482.8H667V485.4H668V487.6H669V488.5H670V488.5H671V488.5H672V488.5H673V488.5H674V488.5H675V488.5H676V488.5H677V488.5H678V488.5H679V488.5H680V488.5H681V488.5H682V488.5H683V488.5H684V488.5H685V488.5H686V488.6H687V488.6H688V488.6H689V488.6H690V484.2H691V480.4H692V479.0H693V478.6H694V478.7H695V478.6H696V478.9H697V478.2H698V478.8H699V478.6H700V477.8H701V478.5H702V478.2H703V478.0H704V478.1H705V479.0H706V479.5H707V480.0H708V480.7H709V481.6H710V482.4H711V482.6H712V483.6H713V484.1H714V484.8H715V485.2H716V485.2H717V485.5H718V485.4H719V485.3H720V484.1H721V480.6H722V477.1H723V474.0H724V472.4H725V471.5H726V471.7H727V471.1H728V470.1H729V471.0H730V469.7H731V470.0H732V469.6H733V470.0H734V467.6H735V466.7H736V465.4H737V464.4H738V465.4H739V468.8H740V470.8H741V472.5H742V473.9H743V476.2H744V473.6H745V472.0H746V468.8H747V466.9H748V465.3H749V462.7H750V465.8H751V467.0H752V469.3H753V471.6H754V472.7H755V475.0H756V476.5H757V478.2H758V479.5H759V481.5H760V483.0H761V484.3H762V485.4H763V486.2H764V486.7H765V487.2H766V487.8H767V488.2H768V488.3H769V488.1H770V487.8H771V487.5H772V487.3H773V487.0H774V486.9H775V486.5H776V486.1H777V485.8H778V485.5H779V485.5H780V485.3H781V485.4H782V485.5H783V485.6H784V485.5H785V485.6H786V485.6H787V485.7H788V485.9H789V486.0H790V485.9H791V486.0H792V486.1H793V486.0H794V486.2H795V486.2H796V486.3H797V486.3H798V486.5H799V486.5H800V486.4H801V486.6H802V486.7H803V486.7H804V487.0H805V487.1H806V487.1H807V487.4H808V487.6H809V487.6H810V487.8H811V488.0H812V488.1H813V488.3H814V488.5H815V485.2H816V480.9H817V476.7H818V478.3H819V467.5H820V465.0H821V464.6H822V466.0H823V467.5H824V468.4H825V469.8H826V469.6H827V468.6H828V466.0H829V465.0H830V462.7H831V460.5H832V460.5H833V462.4H834V465.7H835V470.5H836V472.7H837V475.9H838V478.6H839V480.7H840V482.3H841V484.2H842V486.5H843V487.9H844V488.0H845V487.3H846V486.8H847V486.8H848V486.8H849V486.8H850V483.8H851V483.5H852V483.2H853V483.8H854V484.4H855V485.0H856V485.5H857V486.2H858V486.8H859V487.4H860V488.0H861V488.3H862V486.6H863V485.0H864V483.2H865V482.9H866V483.2H867V483.8H868V483.8H869V484.4H870V484.5H871V485.0H872V485.1H873V483.4H874V483.9H875V484.3H876V485.1H877V485.6H878V486.3H879V486.7H880V487.4H881V488.0H882V487.2H883V479.5H884V471.3H885V471.9H886V473.4H887V475.5H888V476.9H889V478.6H890V480.6H891V477.1H892V474.4H893V472.2H894V469.3H895V467.0H896V464.5H897V466.6H898V467.8H899V470.2H900V473.3H901V475.1H902V476.2H903V479.2H904V473.7H905V473.6H906V471.6H907V470.2H908V469.3H909V469.5H910V467.4H911V468.3H912V469.7H913V471.9H914V472.5H915V473.1H916V474.6H917V474.8H918V475.4H919V468.1H920V466.0H921V462.5H922V462.4H923V464.4H924V468.7H925V472.0H926V474.2H927V477.5H928V481.1H929V483.7H930V486.1H931V487.9H932V483.6H933V479.4H934V478.8H935V478.5H936V477.5H937V477.8H938V477.0H939V477.2H940V476.5H941V476.4H942V476.1H943V474.7H944V474.4H945V474.2H946V473.6H947V473.0H948V472.3H949V473.2H950V471.7H951V472.3H952V471.6H953V470.3H954V470.6H955V469.7H956V470.8H957V469.9H958V470.4H959V468.9H960V468.8H961V469.9H962V469.6H963V469.7H964V469.6H965V469.4H966V469.7H967V470.3H968V470.2H969V471.2H970V470.6H971V470.4H972V471.2H973V471.3H974V471.2H975V471.6H976V472.7H977V472.0H978V473.4H979V473.3H980V473.0H981V474.5H982V474.8H983V474.9H984V474.9H985V475.7H986V475.2H987V475.8H988V475.8H989V476.5H990V475.4H991V476.0H992V476.0H993V476.8H994V475.5H995V474.9H996V475.4H997V469.7H998V467.6H999V467.7H1000V470.4H1001V470.8H1002V471.8H1003V473.4H1004V475.3H1005V476.3H1006V478.3H1007V480.6H1008V480.2H1009V476.4H1010V474.3H1011V471.1H1012V467.4H1013V475.2H1014V471.5H1015V468.6H1016V465.5H1017V463.5H1018V461.2H1019V460.5H1020V459.5H1021V459.3H1022V460.5H1023V460.0H1024V459.5H1025V459.5H1026V461.6H1027V462.9H1028V466.4H1029V468.2H1030V470.7H1031V473.4H1032V476.1H1033V477.1H1034V476.9H1035V476.0H1036V476.2H1037V475.3H1038V475.0H1039V474.4H1040V475.5H1041V475.0H1042V475.7H1043V476.7H1044V476.4H1045V477.2H1046V477.8H1047V478.0H1048V479.4H1049V480.1H1050V480.7H1051V481.6H1052V482.7H1053V483.3H1054V484.1H1055V484.9H1056V485.4H1057V486.2H1058V486.8H1059V487.4H1060V487.3H1061V487.1H1062V486.8H1063V486.6H1064V486.3H1065V486.2H1066V486.1H1067V485.9H1068V485.6H1069V485.5H1070V485.1H1071V484.9H1072V484.6H1073V484.4H1074V484.6H1075V484.4H1076V484.2H1077V484.0H1078V484.0H1079V483.8H1080V483.6H1081V483.5H1082V482.7H1083V479.9H1084V475.3H1085V472.2H1086V468.8H1087V468.4H1088V469.1H1089V470.2H1090V470.6H1091V469.8H1092V471.5H1093V471.9H1094V470.8H1095V472.0H1096V472.3H1097V472.8H1098V472.6H1099V473.8H1100V473.1H1101V474.3H1102V475.3H1103V474.6H1104V475.7H1105V475.8H1106V477.1H1107V477.6H1108V478.2H1109V478.5H1110V479.4H1111V479.4H1112V481.2H1113V482.7H1114V479.9H1115V478.6H1116V477.5H1117V478.1H1118V478.7H1119V479.1H1120V480.0H1121V481.3H1122V481.8H1123V482.9H1124V483.7H1125V484.3H1126V485.2H1127V485.8H1128V483.3H1129V480.4H1130V477.5H1131V476.9H1132V476.6H1133V477.1H1134V476.8H1135V476.5H1136V475.5H1137V475.1H1138V475.6H1139V474.9H1140V474.8H1141V473.9H1142V473.7H1143V472.3H1144V472.8H1145V471.9H1146V470.3H1147V470.2H1148V468.9H1149V469.4H1150V468.2H1151V468.1H1152V468.0H1153V466.6H1154V467.0H1155V467.9H1156V467.6H1157V467.4H1158V467.4H1159V467.9H1160V466.6H1161V466.8H1162V466.6H1163V467.6H1164V467.0H1165V467.7H1166V468.1H1167V466.6H1168V510.1H1167V509.3H1166V510.7H1165V509.2H1164V509.0H1163V509.6H1162V509.3H1161V508.7H1160V508.4H1159V509.2H1158V508.6H1157V508.3H1156V506.6H1155V506.9H1154V506.0H1153V505.5H1152V505.5H1151V505.7H1150V505.1H1149V504.1H1148V504.2H1147V503.8H1146V502.9H1145V503.7H1144V504.2H1143V504.4H1142V504.5H1141V504.0H1140V504.1H1139V502.5H1138V500.9H1137V501.2H1136V502.5H1135V503.1H1134V503.3H1133V506.2H1132V505.7H1131V505.6H1130V502.1H1129V497.3H1128V493.2H1127V494.3H1126V495.7H1125V496.5H1124V497.8H1123V498.9H1122V499.8H1121V500.7H1120V502.0H1119V503.1H1118V504.7H1117V504.9H1116V506.9H1115V507.8H1114V501.8H1113V495.2H1112V496.4H1111V499.2H1110V502.2H1109V502.5H1108V504.7H1107V507.2H1106V511.6H1105V511.7H1104V512.6H1103V513.2H1102V513.2H1101V513.7H1100V513.5H1099V506.9H1098V509.2H1097V512.3H1096V513.6H1095V513.1H1094V512.7H1093V513.0H1092V513.0H1091V513.1H1090V514.2H1089V513.5H1088V513.5H1087V512.9H1086V511.7H1085V506.1H1084V495.9H1083V494.2H1082V493.2H1081V493.3H1080V493.2H1079V493.5H1078V493.5H1077V493.5H1076V493.5H1075V493.7H1074V493.8H1073V493.8H1072V493.6H1071V493.8H1070V493.7H1069V493.9H1068V494.1H1067V494.1H1066V494.1H1065V493.9H1064V493.9H1063V494.1H1062V494.1H1061V494.3H1060V494.3H1059V493.9H1058V494.1H1057V494.5H1056V494.4H1055V494.5H1054V494.5H1053V495.4H1052V496.9H1051V498.6H1050V499.9H1049V501.6H1048V503.0H1047V504.6H1046V504.7H1045V506.0H1044V505.7H1043V506.3H1042V502.9H1041V499.4H1040V504.6H1039V509.1H1038V509.0H1037V509.5H1036V511.4H1035V510.4H1034V510.6H1033V504.6H1032V501.8H1031V512.0H1030V512.3H1029V512.5H1028V513.0H1027V511.8H1026V513.4H1025V512.3H1024V513.6H1023V514.0H1022V513.2H1021V513.3H1020V512.8H1019V512.7H1018V511.6H1017V509.0H1016V503.2H1015V506.7H1014V505.5H1013V511.7H1012V508.4H1011V505.2H1010V501.9H1009V499.7H1008V496.4H1007V496.4H1006V498.2H1005V499.8H1004V501.3H1003V502.3H1002V504.1H1001V505.7H1000V507.4H999V506.6H998V502.4H997V500.6H996V500.6H995V501.2H994V501.6H993V501.4H992V502.0H991V502.0H990V502.7H989V503.5H988V503.0H987V503.2H986V504.0H985V504.3H984V503.6H983V503.8H982V504.9H981V504.6H980V504.5H979V505.7H978V504.9H977V506.2H976V505.6H975V505.9H974V507.0H973V506.9H972V507.1H971V507.0H970V508.1H969V508.4H968V507.9H967V509.7H966V509.5H965V508.9H964V508.8H963V508.4H962V509.3H961V509.0H960V509.5H959V509.3H958V508.5H957V509.8H956V508.7H955V509.6H954V508.2H953V508.0H952V508.2H951V507.8H950V507.2H949V507.8H948V506.7H947V506.2H946V505.6H945V506.0H944V505.1H943V505.6H942V504.1H941V503.7H940V503.6H939V503.1H938V502.9H937V502.9H936V502.4H935V501.4H934V500.8H933V499.2H932V495.6H931V493.7H930V493.7H929V493.6H928V494.8H927V496.3H926V498.2H925V499.2H924V500.9H923V502.8H922V503.8H921V505.8H920V506.8H919V500.4H918V504.6H917V506.7H916V506.5H915V507.8H914V507.6H913V507.0H912V507.3H911V507.3H910V507.9H909V508.5H908V508.6H907V504.6H906V508.0H905V508.9H904V509.1H903V505.3H902V507.2H901V508.5H900V508.6H899V509.4H898V508.2H897V509.0H896V509.6H895V508.1H894V508.1H893V507.7H892V507.6H891V499.8H890V503.1H889V506.4H888V507.0H887V506.9H886V507.1H885V505.9H884V499.8H883V493.8H882V493.3H881V493.9H880V494.3H879V494.8H878V495.6H877V496.1H876V496.3H875V496.7H874V497.6H873V494.5H872V495.0H871V495.6H870V496.2H869V496.7H868V497.7H867V497.3H866V495.8H865V494.9H864V493.3H863V492.7H862V491.7H861V491.5H860V491.5H859V491.4H858V491.5H857V491.5H856V491.4H855V491.5H854V491.5H853V491.5H852V491.6H851V491.5H850V491.6H849V491.4H848V491.6H847V491.5H846V491.5H845V491.5H844V491.8H843V493.0H842V493.9H841V495.2H840V496.2H839V497.0H838V499.4H837V502.8H836V506.5H835V510.8H834V515.2H833V517.7H832V517.9H831V517.8H830V517.8H829V516.8H828V514.8H827V513.8H826V514.8H825V512.8H824V512.7H823V513.0H822V513.3H821V512.8H820V513.7H819V504.5H818V495.0H817V490.5H816V491.0H815V491.5H814V491.5H813V491.5H812V491.5H811V491.5H810V491.6H809V491.5H808V491.5H807V491.5H806V491.5H805V491.4H804V491.6H803V491.5H802V491.6H801V491.5H800V491.5H799V491.4H798V491.6H797V491.5H796V491.5H795V491.5H794V491.5H793V491.4H792V491.6H791V491.5H790V491.5H789V491.5H788V491.4H787V491.5H786V491.5H785V491.4H784V491.5H783V491.4H782V491.5H781V491.6H780V491.5H779V491.6H778V491.7H777V491.7H776V491.9H775V491.9H774V492.0H773V492.0H772V492.2H771V492.2H770V492.4H769V492.4H768V492.5H767V492.5H766V492.5H765V492.6H764V492.8H763V493.6H762V494.4H761V495.3H760V496.3H759V496.9H758V497.7H757V499.0H756V500.2H755V500.6H754V502.1H753V503.0H752V503.4H751V505.1H750V505.4H749V507.0H748V507.8H747V508.1H746V509.1H745V509.6H744V508.5H743V508.0H742V506.7H741V506.5H740V504.2H739V503.9H738V502.1H737V501.5H736V500.4H735V499.3H734V498.0H733V505.6H732V503.9H731V503.7H730V503.0H729V502.9H728V501.6H727V501.7H726V501.2H725V500.1H724V499.5H723V498.7H722V497.0H721V494.8H720V492.6H719V491.8H718V492.1H717V492.5H716V492.4H715V493.2H714V493.8H713V494.3H712V494.4H711V494.8H710V495.3H709V495.5H708V495.4H707V495.0H706V495.1H705V495.2H704V495.4H703V495.5H702V495.3H701V495.3H700V495.5H699V495.4H698V495.4H697V495.2H696V495.2H695V495.3H694V495.1H693V494.0H692V492.6H691V491.2H690V490.3H689V490.4H688V490.4H687V490.5H686V490.6H685V490.7H684V490.8H683V490.9H682V491.0H681V491.0H680V491.1H679V491.1H678V491.3H677V491.4H676V491.5H675V491.5H674V491.7H673V491.8H672V492.0H671V492.1H670V492.2H669V492.4H668V492.4H667V492.7H666V492.7H665V492.7H664V491.4H663V491.4H662V491.4H661V491.4H660V491.2H659V490.9H658V490.7H657V490.4H656V492.5H655V496.7H654V500.8H653V505.5H652V509.0H651V510.0H650V510.3H649V511.8H648V511.5H647V511.2H646V510.8H645V512.2H644V512.0H643V512.7H642V511.8H641V509.2H640V499.5H639V490.2H638V490.2H637V490.2H636V490.2H635V490.2H634V490.2H633V490.2H632V490.2H631V490.2H630V490.2H629V491.5H628V492.4H627V494.5H626V496.4H625V498.3H624V500.4H623V501.8H622V504.1H621V506.4H620V508.3H619V509.5H618V511.7H617V511.7H616V514.1H615V514.3H614V514.1H613V516.0H612V516.4H611V518.0H610V514.8H609V504.0H608V495.1H607V490.4H606V490.7H605V490.9H604V491.1H603V491.5H602V491.7H601V492.0H600V492.2H599V492.5H598V493.1H597V494.9H596V496.9H595V498.7H594V500.5H593V499.8H592V500.9H591V501.8H590V501.7H589V496.9H588V498.3H587V500.9H586V500.4H585V500.2H584V499.9H583V500.1H582V499.8H581V499.1H580V498.8H579V498.4H578V499.2H577V499.3H576V500.1H575V500.6H574V500.3H573V500.4H572V500.9H571V501.0H570V501.6H569V500.4H568V499.1H567V497.6H566V496.1H565V494.9H564V494.6H563V495.6H562V496.8H561V497.9H560V499.2H559V500.0H558V502.1H557V502.4H556V503.9H555V505.2H554V504.3H553V503.4H552V502.9H551V502.4H550V501.2H549V500.9H548V500.2H547V499.5H546V498.2H545V496.7H544V495.1H543V493.9H542V492.9H541V494.4H540V493.9H539V497.0H538V498.6H537V499.2H536V499.0H535V498.6H534V498.5H533V498.3H532V497.9H531V497.6H530V497.2H529V496.5H528V495.5H527V494.7H526V493.9H525V492.8H524V492.0H523V491.5H522V491.7H521V491.8H520V492.1H519V492.2H518V492.1H517V492.3H516V492.4H515V492.8H514V493.1H513V494.6H512V496.2H511V498.1H510V499.9H509V501.4H508V502.4H507V503.8H506V501.0H505V499.1H504V496.1H503V494.1H502V493.9H501V495.5H500V497.5H499V499.3H498V501.0H497V501.2H496V500.6H495V500.4H494V500.0H493V499.7H492V498.9H491V500.3H490V501.1H489V501.4H488V502.2H487V503.7H486V503.6H485V503.5H484V502.4H483V502.0H482V501.3H481V500.0H480V499.7H479V499.1H478V497.3H477V496.1H476V494.6H475V493.5H474V493.7H473V495.0H472V496.7H471V498.7H470V499.8H469V499.8H468V500.1H467V499.4H466V499.8H465V498.9H464V498.9H463V495.9H462V492.5H461V492.5H460V493.8H459V493.7H458V496.0H457V498.0H456V500.2H455V503.2H454V504.9H453V508.2H452V508.2H451V508.9H450V509.1H449V509.0H448V507.6H447V507.5H446V500.7H445V492.9H444V492.8H443V492.8H442V492.6H441V493.1H440V493.8H439V494.3H438V494.6H437V495.0H436V495.3H435V495.6H434V495.9H433V496.5H432V497.0H431V497.7H430V497.6H429V498.2H428V498.3H427V499.1H426V499.8H425V500.3H424V499.5H423V499.8H422V500.0H421V500.1H420V501.1H419V501.2H418V500.5H417V501.2H416V501.5H415V501.3H414V501.6H413V501.3H412V501.6H411V501.7H410V499.6H409V501.6H408V502.0H407V501.9H406V500.6H405V501.3H404V501.3H403V501.7H402V501.6H401V500.6H400V500.3H399V500.3H398V499.3H397V498.9H396V498.5H395V494.4H394V496.9H393V496.4H392V496.8H391V497.6H390V498.2H389V499.4H388V499.7H387V500.6H386V500.9H385V502.3H384V502.7H383V502.3H382V502.2H381V501.4H380V501.1H379V501.3H378V500.5H377V500.5H376V499.7H375V499.1H374V499.7H373V496.0H372V502.1H371V503.5H370V504.7H369V506.3H368V507.3H367V508.1H366V508.5H365V509.1H364V509.4H363V508.7H362V509.3H361V508.8H360V510.6H359V510.6H358V509.8H357V508.0H356V505.1H355V502.0H354V495.3H353V495.1H352V492.8H351V492.7H350V492.8H349V492.7H348V492.9H347V492.8H346V492.8H345V492.7H344V492.7H343V492.9H342V493.4H341V494.2H340V495.4H339V496.2H338V496.8H337V498.2H336V498.9H335V499.7H334V500.6H333V500.1H332V501.0H331V501.3H330V501.1H329V501.0H328V501.0H327V501.8H326V501.9H325V502.4H324V504.0H323V503.7H322V504.8H321V505.1H320V504.3H319V495.1H318V500.3H317V498.3H316V496.2H315V494.6H314V492.4H313V492.4H312V492.6H311V492.7H310V492.7H309V492.7H308V493.7H307V496.8H306V497.9H305V498.8H304V499.6H303V500.7H302V501.1H301V502.0H300V501.9H299V502.6H298V502.3H297V501.9H296V502.1H295V503.2H294V502.8H293V501.6H292V501.2H291V501.0H290V500.8H289V501.7H288V500.8H287V502.6H286V503.5H285V504.6H284V504.9H283V504.4H282V502.5H281V502.6H280V502.4H279V501.9H278V500.6H277V499.7H276V498.7H275V497.2H274V497.5H273V499.3H272V501.1H271V502.9H270V503.4H269V503.5H268V502.9H267V503.3H266V502.1H265V498.2H264V500.0H263V501.5H262V501.6H261V500.8H260V500.5H259V500.5H258V500.7H257V499.8H256V499.1H255V498.8H254V498.2H253V497.8H252V497.5H251V497.0H250V495.9H249V495.3H248V494.6H247V493.8H246V491.9H245V493.7H244V494.4H243V495.3H242V496.3H241V496.8H240V498.0H239V499.0H238V498.3H237V497.1H236V496.7H235V495.3H234V494.7H233V493.8H232V492.8H231V496.3H230V500.2H229V503.0H228V503.2H227V503.7H226V504.3H225V504.9H224V506.0H223V507.0H222V507.5H221V507.1H220V507.5H219V504.7H218V501.9H217V498.3H216V494.6H215V494.7H214V496.3H213V497.7H212V499.3H211V499.9H210V500.6H209V500.5H208V501.9H207V502.5H206V503.5H205V503.0H204V507.8H203V510.1H202V512.5H201V513.8H200V501.7H199V490.0H198V490.0H197V490.0H196V490.0H195V490.0H194V490.0H193V490.0H192V490.0H191V490.0H190V490.0H189V490.0H188V490.0H187V490.0H186V490.0H185V490.0H184V490.0H183V490.0H182V490.0H181V490.0H180V490.0H179V490.0H178V490.0H177V490.0H176V490.0H175V490.0H174V490.0H173Z" fill="#6767dd"/>
</svg>
<!-- scrollbars -->
<div class="a" style="left:1175px;top:197px;width:21px;height:416px;background:#cfd0d0;border-left:1.5px solid #f2f2f4"></div>
<div class="a" style="left:1176px;top:197px;width:21px;height:21px;background:#f2f2f4"></div>
<div class="a" style="left:1176px;top:589px;width:21px;height:24px;background:#f2f2f4"></div>
<div class="a" style="left:3px;top:613px;width:1194px;height:2px;background:#f4f4fa"></div>
<div class="a" style="left:178px;top:614px;width:998px;height:21px;background:#f0f0f0"></div>
<div class="a" style="left:200px;top:615px;width:101px;height:19px;background:#cdcdcd"></div>
<div class="a" style="left:1176px;top:613px;width:21px;height:23px;background:#f6f7fb"></div>
<div class="hl" style="left:3px;top:635px;width:1194px;background:#d2d4da"></div>
<svg style="left:0;top:0" width="1200" height="675">
<path d="M1181.5 213 L1186.5 208 L1191.5 213" fill="none" stroke="#555" stroke-width="2.2"/>
<path d="M1181.5 599 L1186.5 604 L1191.5 599" fill="none" stroke="#555" stroke-width="2.2"/>
<path d="M192.5 620 L187.5 624.5 L192.5 629" fill="none" stroke="#555" stroke-width="2.2"/>
<path d="M1161.5 620 L1166.5 624.5 L1161.5 629" fill="none" stroke="#555" stroke-width="2.2"/>
</svg>
<!-- selection toolbar -->
<div class="grip" style="left:8px;top:642px;height:33px"></div>
<div class="vl" style="left:16px;top:636px;height:39px"></div>
<div class="a" style="left:24.5px;top:649px;font-size:15.3px;line-height:18px;color:#1a1a1a;letter-spacing:0.2px">Project Rate (Hz):</div>
<div class="vl" style="left:156px;top:647px;height:21px;background:#a8a8a8"></div>
<div class="a" style="left:163.5px;top:649px;font-size:15.3px;line-height:18px;color:#1a1a1a;letter-spacing:0.7px">Snap-To</div>
<div class="vl" style="left:267px;top:647px;height:21px;background:#a8a8a8"></div>
<div class="a" style="left:275px;top:649px;font-size:15.3px;line-height:18px;color:#1a1a1a;letter-spacing:0.35px">Audio Position</div>
<div class="vl" style="left:475px;top:647px;height:21px;background:#a8a8a8"></div>
<div class="dd" style="left:484px;top:644px;width:387px;height:28px;line-height:26px;font-size:15.3px;padding-left:2.5px;letter-spacing:0.2px">Start and End of Selection<div class="chev" style="left:369px;top:6px"></div></div>
<div class="a" style="left:24px;top:672.5px;width:104px;height:2.5px;background:#e2e2e2;border-top:1.5px solid #8a8a8a"></div>
<div class="a" style="left:164px;top:672.5px;width:94px;height:2.5px;background:#e2e2e2;border-top:1.5px solid #8a8a8a"></div>
<div class="a" style="left:275px;top:672.5px;width:107px;height:2.5px;background:#e2e2e2;border-top:1.5px solid #8a8a8a"></div>
<div class="a" style="left:484px;top:672.5px;width:189px;height:2.5px;background:#e2e2e2;border-top:1.5px solid #8a8a8a"></div>
<div class="a" style="left:682px;top:672.5px;width:189px;height:2.5px;background:#e2e2e2;border-top:1.5px solid #8a8a8a"></div>

<div class="a" style="left:1196px;top:0;width:2px;height:675px;background:#d8e7f8"></div>
<div class="a" style="left:1198px;top:0;width:1px;height:675px;background:#6d8db5"></div>
<div class="a" style="left:1199px;top:0;width:1px;height:675px;background:#8ab2da"></div>
</body></html>
